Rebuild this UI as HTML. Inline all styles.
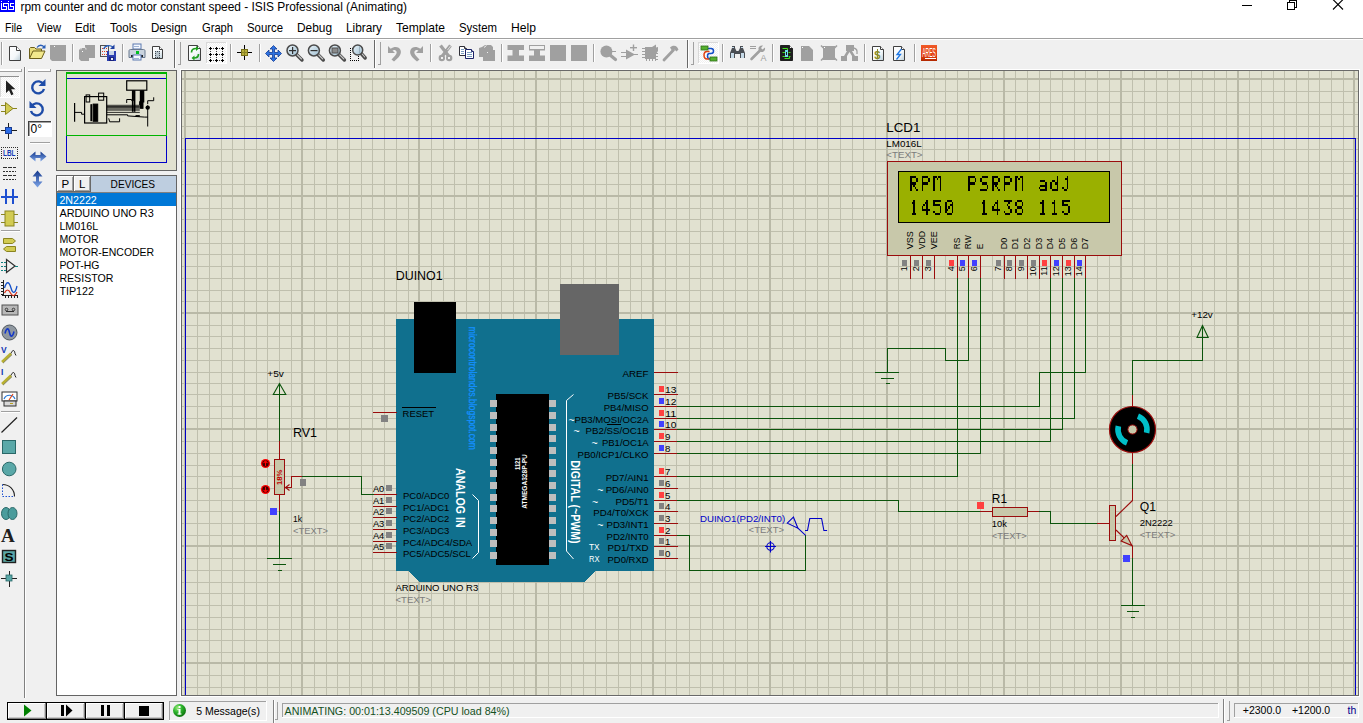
<!DOCTYPE html>
<html><head><meta charset="utf-8"><title>rpm counter and dc motor constant speed - ISIS Professional (Animating)</title>
<style>html,body{margin:0;padding:0;background:#F0F0F0;overflow:hidden}svg{display:block}text{font-family:"Liberation Sans",sans-serif;white-space:pre}</style></head><body>
<svg width="1363" height="723" viewBox="0 0 1363 723">
<rect x="0" y="0" width="1363" height="723" fill="#F0F0F0" />
<rect x="0" y="0" width="1363" height="38" fill="#FFFFFF" />
<rect x="0" y="38" width="1363" height="1" fill="#A0A0A0" />
<rect x="0" y="39" width="1363" height="1" fill="#FFFFFF" />
<rect x="0" y="0" width="15" height="12" fill="#0000FF" />
<rect x="1" y="1" width="1" height="1" fill="#FFFFFF" />
<rect x="8" y="1" width="1" height="1" fill="#FFFFFF" />
<rect x="1" y="3" width="1" height="1" fill="#FFFFFF" />
<rect x="3" y="3" width="1" height="1" fill="#FFFFFF" />
<rect x="4" y="3" width="1" height="1" fill="#FFFFFF" />
<rect x="5" y="3" width="1" height="1" fill="#FFFFFF" />
<rect x="6" y="3" width="1" height="1" fill="#FFFFFF" />
<rect x="7" y="3" width="1" height="1" fill="#FFFFFF" />
<rect x="8" y="3" width="1" height="1" fill="#FFFFFF" />
<rect x="10" y="3" width="1" height="1" fill="#FFFFFF" />
<rect x="11" y="3" width="1" height="1" fill="#FFFFFF" />
<rect x="12" y="3" width="1" height="1" fill="#FFFFFF" />
<rect x="13" y="3" width="1" height="1" fill="#FFFFFF" />
<rect x="1" y="4" width="1" height="1" fill="#FFFFFF" />
<rect x="3" y="4" width="1" height="1" fill="#FFFFFF" />
<rect x="8" y="4" width="1" height="1" fill="#FFFFFF" />
<rect x="10" y="4" width="1" height="1" fill="#FFFFFF" />
<rect x="1" y="5" width="1" height="1" fill="#FFFFFF" />
<rect x="3" y="5" width="1" height="1" fill="#FFFFFF" />
<rect x="8" y="5" width="1" height="1" fill="#FFFFFF" />
<rect x="10" y="5" width="1" height="1" fill="#FFFFFF" />
<rect x="1" y="6" width="1" height="1" fill="#FFFFFF" />
<rect x="3" y="6" width="1" height="1" fill="#FFFFFF" />
<rect x="4" y="6" width="1" height="1" fill="#FFFFFF" />
<rect x="5" y="6" width="1" height="1" fill="#FFFFFF" />
<rect x="6" y="6" width="1" height="1" fill="#FFFFFF" />
<rect x="8" y="6" width="1" height="1" fill="#FFFFFF" />
<rect x="10" y="6" width="1" height="1" fill="#FFFFFF" />
<rect x="11" y="6" width="1" height="1" fill="#FFFFFF" />
<rect x="12" y="6" width="1" height="1" fill="#FFFFFF" />
<rect x="13" y="6" width="1" height="1" fill="#FFFFFF" />
<rect x="1" y="7" width="1" height="1" fill="#FFFFFF" />
<rect x="6" y="7" width="1" height="1" fill="#FFFFFF" />
<rect x="8" y="7" width="1" height="1" fill="#FFFFFF" />
<rect x="13" y="7" width="1" height="1" fill="#FFFFFF" />
<rect x="1" y="8" width="1" height="1" fill="#FFFFFF" />
<rect x="6" y="8" width="1" height="1" fill="#FFFFFF" />
<rect x="8" y="8" width="1" height="1" fill="#FFFFFF" />
<rect x="13" y="8" width="1" height="1" fill="#FFFFFF" />
<rect x="1" y="9" width="1" height="1" fill="#FFFFFF" />
<rect x="2" y="9" width="1" height="1" fill="#FFFFFF" />
<rect x="3" y="9" width="1" height="1" fill="#FFFFFF" />
<rect x="4" y="9" width="1" height="1" fill="#FFFFFF" />
<rect x="5" y="9" width="1" height="1" fill="#FFFFFF" />
<rect x="6" y="9" width="1" height="1" fill="#FFFFFF" />
<rect x="8" y="9" width="1" height="1" fill="#FFFFFF" />
<rect x="9" y="9" width="1" height="1" fill="#FFFFFF" />
<rect x="10" y="9" width="1" height="1" fill="#FFFFFF" />
<rect x="11" y="9" width="1" height="1" fill="#FFFFFF" />
<rect x="12" y="9" width="1" height="1" fill="#FFFFFF" />
<rect x="13" y="9" width="1" height="1" fill="#FFFFFF" />
<text x="20.5" y="11" font-size="12" fill="#000" textLength="386.5" lengthAdjust="spacingAndGlyphs" >rpm counter and dc motor constant speed - ISIS Professional (Animating)</text>
<rect x="1242" y="5" width="10" height="1" fill="#000" />
<g fill="none" stroke="#000" stroke-width="1" shape-rendering="crispEdges"><rect x="1287.5" y="2.5" width="7" height="7"/><path d="M1289.5 2.5v-2h7v7h-2"/></g>
<path d="M1333 -0.5l10 10M1343 -0.5l-10 10" stroke="#000" stroke-width="1.1" fill="none"/>
<text x="5" y="31.5" font-size="12.2" fill="#000" textLength="17" lengthAdjust="spacingAndGlyphs" >File</text>
<text x="37" y="31.5" font-size="12.2" fill="#000" textLength="24" lengthAdjust="spacingAndGlyphs" >View</text>
<text x="75" y="31.5" font-size="12.2" fill="#000" textLength="20" lengthAdjust="spacingAndGlyphs" >Edit</text>
<text x="110" y="31.5" font-size="12.2" fill="#000" textLength="27" lengthAdjust="spacingAndGlyphs" >Tools</text>
<text x="151" y="31.5" font-size="12.2" fill="#000" textLength="36" lengthAdjust="spacingAndGlyphs" >Design</text>
<text x="202" y="31.5" font-size="12.2" fill="#000" textLength="31" lengthAdjust="spacingAndGlyphs" >Graph</text>
<text x="247" y="31.5" font-size="12.2" fill="#000" textLength="36" lengthAdjust="spacingAndGlyphs" >Source</text>
<text x="297" y="31.5" font-size="12.2" fill="#000" textLength="35" lengthAdjust="spacingAndGlyphs" >Debug</text>
<text x="346" y="31.5" font-size="12.2" fill="#000" textLength="36" lengthAdjust="spacingAndGlyphs" >Library</text>
<text x="396" y="31.5" font-size="12.2" fill="#000" textLength="49" lengthAdjust="spacingAndGlyphs" >Template</text>
<text x="459" y="31.5" font-size="12.2" fill="#000" textLength="38" lengthAdjust="spacingAndGlyphs" >System</text>
<text x="511" y="31.5" font-size="12.2" fill="#000" textLength="25" lengthAdjust="spacingAndGlyphs" >Help</text>
<rect x="1" y="42" width="1" height="23" fill="#A0A0A0" />
<rect x="2" y="42" width="1" height="23" fill="#FFFFFF" />
<rect x="72" y="44" width="1" height="18" fill="#A0A0A0" />
<rect x="73" y="44" width="1" height="18" fill="#FFFFFF" />
<rect x="122" y="44" width="1" height="18" fill="#A0A0A0" />
<rect x="123" y="44" width="1" height="18" fill="#FFFFFF" />
<rect x="230" y="44" width="1" height="18" fill="#A0A0A0" />
<rect x="231" y="44" width="1" height="18" fill="#FFFFFF" />
<rect x="259" y="44" width="1" height="18" fill="#A0A0A0" />
<rect x="260" y="44" width="1" height="18" fill="#FFFFFF" />
<rect x="430" y="44" width="1" height="18" fill="#A0A0A0" />
<rect x="431" y="44" width="1" height="18" fill="#FFFFFF" />
<rect x="501" y="44" width="1" height="18" fill="#A0A0A0" />
<rect x="502" y="44" width="1" height="18" fill="#FFFFFF" />
<rect x="593" y="44" width="1" height="18" fill="#A0A0A0" />
<rect x="594" y="44" width="1" height="18" fill="#FFFFFF" />
<rect x="722" y="44" width="1" height="18" fill="#A0A0A0" />
<rect x="723" y="44" width="1" height="18" fill="#FFFFFF" />
<rect x="772" y="44" width="1" height="18" fill="#A0A0A0" />
<rect x="773" y="44" width="1" height="18" fill="#FFFFFF" />
<rect x="864" y="44" width="1" height="18" fill="#A0A0A0" />
<rect x="865" y="44" width="1" height="18" fill="#FFFFFF" />
<rect x="914" y="44" width="1" height="18" fill="#A0A0A0" />
<rect x="915" y="44" width="1" height="18" fill="#FFFFFF" />
<rect x="174" y="40" width="1" height="28" fill="#696969" />
<rect x="175" y="40" width="1" height="28" fill="#FFFFFF" />
<rect x="180" y="42" width="1" height="23" fill="#A0A0A0" />
<rect x="178" y="64" width="3" height="1" fill="#A0A0A0" />
<rect x="374" y="40" width="1" height="28" fill="#696969" />
<rect x="375" y="40" width="1" height="28" fill="#FFFFFF" />
<rect x="380" y="42" width="1" height="23" fill="#A0A0A0" />
<rect x="378" y="64" width="3" height="1" fill="#A0A0A0" />
<rect x="687" y="40" width="1" height="28" fill="#696969" />
<rect x="688" y="40" width="1" height="28" fill="#FFFFFF" />
<rect x="693" y="42" width="1" height="23" fill="#A0A0A0" />
<rect x="691" y="64" width="3" height="1" fill="#A0A0A0" />
<rect x="0" y="69" width="21" height="2" fill="#FFFFFF" />
<rect x="0" y="71" width="22" height="1" fill="#A0A0A0" />
<rect x="21" y="69" width="1" height="3" fill="#A0A0A0" />
<rect x="28" y="69" width="22" height="2" fill="#FFFFFF" />
<rect x="28" y="71" width="23" height="1" fill="#A0A0A0" />
<rect x="50" y="69" width="1" height="3" fill="#A0A0A0" />
<rect x="24" y="67" width="1" height="631" fill="#808080" />
<rect x="25" y="67" width="1" height="631" fill="#FFFFFF" />
<rect x="1" y="230" width="19" height="1" fill="#A0A0A0" />
<rect x="1" y="231" width="19" height="1" fill="#FFFFFF" />
<rect x="1" y="411" width="19" height="1" fill="#A0A0A0" />
<rect x="1" y="412" width="19" height="1" fill="#FFFFFF" />
<rect x="30" y="142" width="20" height="1" fill="#A0A0A0" />
<rect x="30" y="143" width="20" height="1" fill="#FFFFFF" />
<rect x="28" y="121" width="24" height="16" fill="#FFFFFF" />
<rect x="28" y="121" width="23" height="1" fill="#404040" />
<rect x="28" y="121" width="1" height="15" fill="#404040" />
<rect x="29" y="122" width="22" height="1" fill="#A0A0A0" />
<rect x="29" y="122" width="1" height="14" fill="#A0A0A0" />
<text x="30.5" y="132.7" font-size="12" fill="#000" >0°</text>
<rect x="56" y="70" width="121" height="101" fill="#646464" />
<rect x="57" y="71" width="119" height="99" fill="#E1E1D0" />
<rect x="56" y="175" width="121" height="521" fill="#646464" />
<rect x="57" y="176" width="119" height="519" fill="#FFFFFF" />
<rect x="57" y="176" width="119" height="16" fill="#BECEE0" />
<rect x="57" y="192" width="119" height="1" fill="#808080" />
<rect x="57" y="176" width="17" height="16" fill="#F0F0F0" />
<rect x="57" y="176" width="17" height="1" fill="#FFFFFF" />
<rect x="57" y="176" width="1" height="16" fill="#FFFFFF" />
<rect x="73" y="176" width="1" height="16" fill="#696969" />
<rect x="57" y="191" width="17" height="1" fill="#696969" />
<rect x="72" y="177" width="1" height="14" fill="#A0A0A0" />
<rect x="58" y="190" width="15" height="1" fill="#A0A0A0" />
<rect x="74" y="176" width="17" height="16" fill="#F0F0F0" />
<rect x="74" y="176" width="17" height="1" fill="#FFFFFF" />
<rect x="74" y="176" width="1" height="16" fill="#FFFFFF" />
<rect x="90" y="176" width="1" height="16" fill="#696969" />
<rect x="74" y="191" width="17" height="1" fill="#696969" />
<rect x="89" y="177" width="1" height="14" fill="#A0A0A0" />
<rect x="75" y="190" width="15" height="1" fill="#A0A0A0" />
<text x="61.5" y="187.6" font-size="11.5" fill="#000" >P</text>
<text x="79" y="187.6" font-size="11.5" fill="#000" >L</text>
<text x="110.6" y="187.6" font-size="11.5" fill="#000" textLength="44.5" lengthAdjust="spacingAndGlyphs" >DEVICES</text>
<rect x="57" y="193" width="119" height="13" fill="#0078D7" />
<text x="59.4" y="203.6" font-size="11.3" fill="#FFF" textLength="37.4" lengthAdjust="spacingAndGlyphs" >2N2222</text>
<text x="59.4" y="216.6" font-size="11.3" fill="#000" textLength="94.3" lengthAdjust="spacingAndGlyphs" >ARDUINO UNO R3</text>
<text x="59.4" y="229.6" font-size="11.3" fill="#000" textLength="38.8" lengthAdjust="spacingAndGlyphs" >LM016L</text>
<text x="59.4" y="242.6" font-size="11.3" fill="#000" textLength="39.2" lengthAdjust="spacingAndGlyphs" >MOTOR</text>
<text x="59.4" y="255.6" font-size="11.3" fill="#000" textLength="94.8" lengthAdjust="spacingAndGlyphs" >MOTOR-ENCODER</text>
<text x="59.4" y="268.6" font-size="11.3" fill="#000" textLength="40" lengthAdjust="spacingAndGlyphs" >POT-HG</text>
<text x="59.4" y="281.6" font-size="11.3" fill="#000" textLength="54" lengthAdjust="spacingAndGlyphs" >RESISTOR</text>
<text x="59.4" y="294.6" font-size="11.3" fill="#000" textLength="34.6" lengthAdjust="spacingAndGlyphs" >TIP122</text>
<rect x="7" y="702" width="157" height="18" fill="#000" />
<rect x="8" y="703" width="38" height="16" fill="#F0F0F0" />
<rect x="8" y="703" width="38" height="1" fill="#FFFFFF" />
<rect x="8" y="703" width="1" height="16" fill="#FFFFFF" />
<rect x="45" y="703" width="1" height="16" fill="#808080" />
<rect x="8" y="718" width="38" height="1" fill="#808080" />
<rect x="44" y="704" width="1" height="14" fill="#C8C8C8" />
<rect x="9" y="717" width="36" height="1" fill="#C8C8C8" />
<rect x="47" y="703" width="38" height="16" fill="#F0F0F0" />
<rect x="47" y="703" width="38" height="1" fill="#FFFFFF" />
<rect x="47" y="703" width="1" height="16" fill="#FFFFFF" />
<rect x="84" y="703" width="1" height="16" fill="#808080" />
<rect x="47" y="718" width="38" height="1" fill="#808080" />
<rect x="83" y="704" width="1" height="14" fill="#C8C8C8" />
<rect x="48" y="717" width="36" height="1" fill="#C8C8C8" />
<rect x="86" y="703" width="38" height="16" fill="#F0F0F0" />
<rect x="86" y="703" width="38" height="1" fill="#FFFFFF" />
<rect x="86" y="703" width="1" height="16" fill="#FFFFFF" />
<rect x="123" y="703" width="1" height="16" fill="#808080" />
<rect x="86" y="718" width="38" height="1" fill="#808080" />
<rect x="122" y="704" width="1" height="14" fill="#C8C8C8" />
<rect x="87" y="717" width="36" height="1" fill="#C8C8C8" />
<rect x="125" y="703" width="38" height="16" fill="#F0F0F0" />
<rect x="125" y="703" width="38" height="1" fill="#FFFFFF" />
<rect x="125" y="703" width="1" height="16" fill="#FFFFFF" />
<rect x="162" y="703" width="1" height="16" fill="#808080" />
<rect x="125" y="718" width="38" height="1" fill="#808080" />
<rect x="161" y="704" width="1" height="14" fill="#C8C8C8" />
<rect x="126" y="717" width="36" height="1" fill="#C8C8C8" />
<path d="M24 704.5v12l7.5-6z" fill="#008000"/>
<rect x="61" y="705" width="3" height="11" fill="#000" />
<path d="M66 704.5v12l6.5-6z" fill="#000"/>
<rect x="101" y="705" width="3" height="11" fill="#000" />
<rect x="107" y="705" width="3" height="11" fill="#000" />
<rect x="139" y="706" width="10" height="10" fill="#000" />
<rect x="169" y="701" width="98" height="20" fill="#FFFFFF" />
<rect x="169" y="701" width="97" height="19" fill="#A0A0A0" />
<rect x="170" y="702" width="96" height="18" fill="#F0F0F0" />
<defs><radialGradient id="gi" cx="35%" cy="30%" r="75%"><stop offset="0" stop-color="#9CEB7C"/><stop offset="0.45" stop-color="#2DB52D"/><stop offset="1" stop-color="#0A6E0A"/></radialGradient></defs>
<circle cx="179.5" cy="710.5" r="6.5" fill="url(#gi)"/>
<rect x="178.5" y="706" width="2" height="2" fill="#FFF" />
<rect x="178.5" y="709" width="2" height="5.5" fill="#FFF" />
<rect x="177.5" y="709" width="1" height="1" fill="#FFF" />
<rect x="177.5" y="713.5" width="4" height="1" fill="#FFF" />
<text x="196.2" y="714.7" font-size="11.5" fill="#000" textLength="63.7" lengthAdjust="spacingAndGlyphs" >5 Message(s)</text>
<rect x="273" y="700" width="1" height="23" fill="#808080" />
<rect x="274" y="700" width="1" height="23" fill="#FFFFFF" />
<rect x="277" y="702" width="1" height="18" fill="#A0A0A0" />
<rect x="275" y="719" width="3" height="1" fill="#A0A0A0" />
<rect x="282" y="703" width="937" height="15" fill="#FFFFFF" />
<rect x="282" y="703" width="936" height="14" fill="#A0A0A0" />
<rect x="283" y="704" width="935" height="13" fill="#F0F0F0" />
<text x="284.6" y="715" font-size="11.7" fill="#14501E" textLength="225" lengthAdjust="spacingAndGlyphs" >ANIMATING: 00:01:13.409509 (CPU load 84%)</text>
<rect x="1223" y="699" width="1" height="24" fill="#808080" />
<rect x="1224" y="699" width="1" height="24" fill="#FFFFFF" />
<rect x="1229" y="701" width="1" height="20" fill="#A0A0A0" />
<rect x="1227" y="720" width="3" height="1" fill="#A0A0A0" />
<rect x="1234" y="703" width="125" height="15" fill="#FFFFFF" />
<rect x="1234" y="703" width="124" height="14" fill="#A0A0A0" />
<rect x="1235" y="704" width="123" height="13" fill="#F0F0F0" />
<text x="1242.8" y="714.3" font-size="11.5" fill="#000" textLength="38.2" lengthAdjust="spacingAndGlyphs" >+2300.0</text>
<text x="1292" y="714.3" font-size="11.5" fill="#000" textLength="38.2" lengthAdjust="spacingAndGlyphs" >+1200.0</text>
<text x="1347.5" y="714.3" font-size="11.5" fill="#00008B" textLength="8.7" lengthAdjust="spacingAndGlyphs" >th</text>
<rect x="180" y="69" width="1180" height="628" fill="#FFFFFF" />
<rect x="181" y="70" width="1178" height="626" fill="#696969" />
<rect x="182" y="71" width="1176" height="624" fill="#E1E1D0" />
<clipPath id="cv"><rect x="182" y="71" width="1176" height="624"/></clipPath>
<g clip-path="url(#cv)">
<g shape-rendering="crispEdges">
<rect x="197" y="71" width="1" height="624" fill="#BFBFAD" />
<rect x="209" y="71" width="1" height="624" fill="#BFBFAD" />
<rect x="221" y="71" width="1" height="624" fill="#BFBFAD" />
<rect x="232" y="71" width="1" height="624" fill="#BFBFAD" />
<rect x="244" y="71" width="1" height="624" fill="#BFBFAD" />
<rect x="256" y="71" width="1" height="624" fill="#BFBFAD" />
<rect x="267" y="71" width="1" height="624" fill="#BFBFAD" />
<rect x="279" y="71" width="1" height="624" fill="#BFBFAD" />
<rect x="291" y="71" width="1" height="624" fill="#BFBFAD" />
<rect x="314" y="71" width="1" height="624" fill="#BFBFAD" />
<rect x="326" y="71" width="1" height="624" fill="#BFBFAD" />
<rect x="337" y="71" width="1" height="624" fill="#BFBFAD" />
<rect x="349" y="71" width="1" height="624" fill="#BFBFAD" />
<rect x="361" y="71" width="1" height="624" fill="#BFBFAD" />
<rect x="372" y="71" width="1" height="624" fill="#BFBFAD" />
<rect x="384" y="71" width="1" height="624" fill="#BFBFAD" />
<rect x="396" y="71" width="1" height="624" fill="#BFBFAD" />
<rect x="408" y="71" width="1" height="624" fill="#BFBFAD" />
<rect x="431" y="71" width="1" height="624" fill="#BFBFAD" />
<rect x="443" y="71" width="1" height="624" fill="#BFBFAD" />
<rect x="454" y="71" width="1" height="624" fill="#BFBFAD" />
<rect x="466" y="71" width="1" height="624" fill="#BFBFAD" />
<rect x="478" y="71" width="1" height="624" fill="#BFBFAD" />
<rect x="489" y="71" width="1" height="624" fill="#BFBFAD" />
<rect x="501" y="71" width="1" height="624" fill="#BFBFAD" />
<rect x="513" y="71" width="1" height="624" fill="#BFBFAD" />
<rect x="524" y="71" width="1" height="624" fill="#BFBFAD" />
<rect x="548" y="71" width="1" height="624" fill="#BFBFAD" />
<rect x="560" y="71" width="1" height="624" fill="#BFBFAD" />
<rect x="571" y="71" width="1" height="624" fill="#BFBFAD" />
<rect x="583" y="71" width="1" height="624" fill="#BFBFAD" />
<rect x="595" y="71" width="1" height="624" fill="#BFBFAD" />
<rect x="606" y="71" width="1" height="624" fill="#BFBFAD" />
<rect x="618" y="71" width="1" height="624" fill="#BFBFAD" />
<rect x="630" y="71" width="1" height="624" fill="#BFBFAD" />
<rect x="641" y="71" width="1" height="624" fill="#BFBFAD" />
<rect x="665" y="71" width="1" height="624" fill="#BFBFAD" />
<rect x="676" y="71" width="1" height="624" fill="#BFBFAD" />
<rect x="689" y="71" width="1" height="624" fill="#BFBFAD" />
<rect x="700" y="71" width="1" height="624" fill="#BFBFAD" />
<rect x="712" y="71" width="1" height="624" fill="#BFBFAD" />
<rect x="723" y="71" width="1" height="624" fill="#BFBFAD" />
<rect x="735" y="71" width="1" height="624" fill="#BFBFAD" />
<rect x="747" y="71" width="1" height="624" fill="#BFBFAD" />
<rect x="758" y="71" width="1" height="624" fill="#BFBFAD" />
<rect x="782" y="71" width="1" height="624" fill="#BFBFAD" />
<rect x="793" y="71" width="1" height="624" fill="#BFBFAD" />
<rect x="805" y="71" width="1" height="624" fill="#BFBFAD" />
<rect x="817" y="71" width="1" height="624" fill="#BFBFAD" />
<rect x="828" y="71" width="1" height="624" fill="#BFBFAD" />
<rect x="840" y="71" width="1" height="624" fill="#BFBFAD" />
<rect x="852" y="71" width="1" height="624" fill="#BFBFAD" />
<rect x="863" y="71" width="1" height="624" fill="#BFBFAD" />
<rect x="875" y="71" width="1" height="624" fill="#BFBFAD" />
<rect x="898" y="71" width="1" height="624" fill="#BFBFAD" />
<rect x="910" y="71" width="1" height="624" fill="#BFBFAD" />
<rect x="922" y="71" width="1" height="624" fill="#BFBFAD" />
<rect x="934" y="71" width="1" height="624" fill="#BFBFAD" />
<rect x="945" y="71" width="1" height="624" fill="#BFBFAD" />
<rect x="957" y="71" width="1" height="624" fill="#BFBFAD" />
<rect x="968" y="71" width="1" height="624" fill="#BFBFAD" />
<rect x="980" y="71" width="1" height="624" fill="#BFBFAD" />
<rect x="992" y="71" width="1" height="624" fill="#BFBFAD" />
<rect x="1015" y="71" width="1" height="624" fill="#BFBFAD" />
<rect x="1027" y="71" width="1" height="624" fill="#BFBFAD" />
<rect x="1039" y="71" width="1" height="624" fill="#BFBFAD" />
<rect x="1050" y="71" width="1" height="624" fill="#BFBFAD" />
<rect x="1062" y="71" width="1" height="624" fill="#BFBFAD" />
<rect x="1074" y="71" width="1" height="624" fill="#BFBFAD" />
<rect x="1085" y="71" width="1" height="624" fill="#BFBFAD" />
<rect x="1097" y="71" width="1" height="624" fill="#BFBFAD" />
<rect x="1109" y="71" width="1" height="624" fill="#BFBFAD" />
<rect x="1132" y="71" width="1" height="624" fill="#BFBFAD" />
<rect x="1144" y="71" width="1" height="624" fill="#BFBFAD" />
<rect x="1156" y="71" width="1" height="624" fill="#BFBFAD" />
<rect x="1167" y="71" width="1" height="624" fill="#BFBFAD" />
<rect x="1179" y="71" width="1" height="624" fill="#BFBFAD" />
<rect x="1191" y="71" width="1" height="624" fill="#BFBFAD" />
<rect x="1202" y="71" width="1" height="624" fill="#BFBFAD" />
<rect x="1214" y="71" width="1" height="624" fill="#BFBFAD" />
<rect x="1226" y="71" width="1" height="624" fill="#BFBFAD" />
<rect x="1249" y="71" width="1" height="624" fill="#BFBFAD" />
<rect x="1261" y="71" width="1" height="624" fill="#BFBFAD" />
<rect x="1273" y="71" width="1" height="624" fill="#BFBFAD" />
<rect x="1284" y="71" width="1" height="624" fill="#BFBFAD" />
<rect x="1296" y="71" width="1" height="624" fill="#BFBFAD" />
<rect x="1308" y="71" width="1" height="624" fill="#BFBFAD" />
<rect x="1319" y="71" width="1" height="624" fill="#BFBFAD" />
<rect x="1331" y="71" width="1" height="624" fill="#BFBFAD" />
<rect x="1343" y="71" width="1" height="624" fill="#BFBFAD" />
<rect x="182" y="91" width="1176" height="1" fill="#BFBFAD" />
<rect x="182" y="102" width="1176" height="1" fill="#BFBFAD" />
<rect x="182" y="114" width="1176" height="1" fill="#BFBFAD" />
<rect x="182" y="126" width="1176" height="1" fill="#BFBFAD" />
<rect x="182" y="138" width="1176" height="1" fill="#BFBFAD" />
<rect x="182" y="149" width="1176" height="1" fill="#BFBFAD" />
<rect x="182" y="161" width="1176" height="1" fill="#BFBFAD" />
<rect x="182" y="173" width="1176" height="1" fill="#BFBFAD" />
<rect x="182" y="184" width="1176" height="1" fill="#BFBFAD" />
<rect x="182" y="208" width="1176" height="1" fill="#BFBFAD" />
<rect x="182" y="219" width="1176" height="1" fill="#BFBFAD" />
<rect x="182" y="231" width="1176" height="1" fill="#BFBFAD" />
<rect x="182" y="243" width="1176" height="1" fill="#BFBFAD" />
<rect x="182" y="254" width="1176" height="1" fill="#BFBFAD" />
<rect x="182" y="266" width="1176" height="1" fill="#BFBFAD" />
<rect x="182" y="278" width="1176" height="1" fill="#BFBFAD" />
<rect x="182" y="290" width="1176" height="1" fill="#BFBFAD" />
<rect x="182" y="301" width="1176" height="1" fill="#BFBFAD" />
<rect x="182" y="325" width="1176" height="1" fill="#BFBFAD" />
<rect x="182" y="336" width="1176" height="1" fill="#BFBFAD" />
<rect x="182" y="348" width="1176" height="1" fill="#BFBFAD" />
<rect x="182" y="360" width="1176" height="1" fill="#BFBFAD" />
<rect x="182" y="372" width="1176" height="1" fill="#BFBFAD" />
<rect x="182" y="383" width="1176" height="1" fill="#BFBFAD" />
<rect x="182" y="394" width="1176" height="1" fill="#BFBFAD" />
<rect x="182" y="406" width="1176" height="1" fill="#BFBFAD" />
<rect x="182" y="418" width="1176" height="1" fill="#BFBFAD" />
<rect x="182" y="441" width="1176" height="1" fill="#BFBFAD" />
<rect x="182" y="453" width="1176" height="1" fill="#BFBFAD" />
<rect x="182" y="465" width="1176" height="1" fill="#BFBFAD" />
<rect x="182" y="476" width="1176" height="1" fill="#BFBFAD" />
<rect x="182" y="488" width="1176" height="1" fill="#BFBFAD" />
<rect x="182" y="500" width="1176" height="1" fill="#BFBFAD" />
<rect x="182" y="511" width="1176" height="1" fill="#BFBFAD" />
<rect x="182" y="523" width="1176" height="1" fill="#BFBFAD" />
<rect x="182" y="535" width="1176" height="1" fill="#BFBFAD" />
<rect x="182" y="558" width="1176" height="1" fill="#BFBFAD" />
<rect x="182" y="570" width="1176" height="1" fill="#BFBFAD" />
<rect x="182" y="582" width="1176" height="1" fill="#BFBFAD" />
<rect x="182" y="593" width="1176" height="1" fill="#BFBFAD" />
<rect x="182" y="605" width="1176" height="1" fill="#BFBFAD" />
<rect x="182" y="617" width="1176" height="1" fill="#BFBFAD" />
<rect x="182" y="629" width="1176" height="1" fill="#BFBFAD" />
<rect x="182" y="640" width="1176" height="1" fill="#BFBFAD" />
<rect x="182" y="652" width="1176" height="1" fill="#BFBFAD" />
<rect x="182" y="675" width="1176" height="1" fill="#BFBFAD" />
<rect x="182" y="687" width="1176" height="1" fill="#BFBFAD" />
<rect x="184" y="71" width="2" height="624" fill="#B9B9A7" />
<rect x="301" y="71" width="2" height="624" fill="#B9B9A7" />
<rect x="418" y="71" width="2" height="624" fill="#B9B9A7" />
<rect x="535" y="71" width="2" height="624" fill="#B9B9A7" />
<rect x="652" y="71" width="2" height="624" fill="#B9B9A7" />
<rect x="769" y="71" width="2" height="624" fill="#B9B9A7" />
<rect x="886" y="71" width="2" height="624" fill="#B9B9A7" />
<rect x="1003" y="71" width="2" height="624" fill="#B9B9A7" />
<rect x="1120" y="71" width="2" height="624" fill="#B9B9A7" />
<rect x="1237" y="71" width="2" height="624" fill="#B9B9A7" />
<rect x="1353" y="71" width="2" height="624" fill="#B9B9A7" />
<rect x="182" y="78" width="1176" height="2" fill="#B9B9A7" />
<rect x="182" y="195" width="1176" height="2" fill="#B9B9A7" />
<rect x="182" y="312" width="1176" height="2" fill="#B9B9A7" />
<rect x="182" y="428" width="1176" height="2" fill="#B9B9A7" />
<rect x="182" y="545" width="1176" height="2" fill="#B9B9A7" />
<rect x="182" y="662" width="1176" height="2" fill="#B9B9A7" />
<rect x="185" y="138" width="1171" height="1" fill="#0000C8" />
<rect x="185" y="138" width="1" height="600" fill="#0000C8" />
<rect x="1355" y="138" width="1" height="600" fill="#0000C8" />
<rect x="887" y="161" width="235" height="95" fill="#9A0C0C" />
<rect x="888" y="162" width="233" height="93" fill="#C8C8AA" />
<rect x="898" y="171" width="212" height="52" fill="#000" />
<rect x="899" y="172" width="210" height="50" fill="#9AB000" />
<rect x="910" y="256" width="1" height="23" fill="#9A0C0C" />
<rect x="902" y="260" width="5" height="6" fill="#828282" />
<text x="913.1" y="249.3" font-size="9.3" fill="#000" textLength="18" lengthAdjust="spacingAndGlyphs" transform="rotate(-90 913.1 249.3)" >VSS</text>
<text x="907.2" y="266.3" font-size="9" fill="#000" text-anchor="end" transform="rotate(-90 907.2 266.3)" >1</text>
<rect x="922" y="256" width="1" height="23" fill="#9A0C0C" />
<rect x="914" y="260" width="5" height="6" fill="#828282" />
<text x="925.1" y="249.3" font-size="9.3" fill="#000" textLength="18.5" lengthAdjust="spacingAndGlyphs" transform="rotate(-90 925.1 249.3)" >VDD</text>
<text x="919.2" y="266.3" font-size="9" fill="#000" text-anchor="end" transform="rotate(-90 919.2 266.3)" >2</text>
<rect x="934" y="256" width="1" height="23" fill="#9A0C0C" />
<rect x="926" y="260" width="5" height="6" fill="#828282" />
<text x="937.1" y="249.3" font-size="9.3" fill="#000" textLength="18" lengthAdjust="spacingAndGlyphs" transform="rotate(-90 937.1 249.3)" >VEE</text>
<text x="931.2" y="266.3" font-size="9" fill="#000" text-anchor="end" transform="rotate(-90 931.2 266.3)" >3</text>
<rect x="957" y="256" width="1" height="23" fill="#9A0C0C" />
<rect x="949" y="260" width="5" height="6" fill="#FF4040" />
<text x="960.1" y="249.3" font-size="9.3" fill="#000" textLength="11.5" lengthAdjust="spacingAndGlyphs" transform="rotate(-90 960.1 249.3)" >RS</text>
<text x="954.2" y="266.3" font-size="9" fill="#000" text-anchor="end" transform="rotate(-90 954.2 266.3)" >4</text>
<rect x="968" y="256" width="1" height="23" fill="#9A0C0C" />
<rect x="960" y="260" width="5" height="6" fill="#4040FF" />
<text x="971.1" y="249.3" font-size="9.3" fill="#000" textLength="14" lengthAdjust="spacingAndGlyphs" transform="rotate(-90 971.1 249.3)" >RW</text>
<text x="965.2" y="266.3" font-size="9" fill="#000" text-anchor="end" transform="rotate(-90 965.2 266.3)" >5</text>
<rect x="980" y="256" width="1" height="23" fill="#9A0C0C" />
<rect x="972" y="260" width="5" height="6" fill="#4040FF" />
<text x="983.1" y="249.3" font-size="9.3" fill="#000" textLength="5.5" lengthAdjust="spacingAndGlyphs" transform="rotate(-90 983.1 249.3)" >E</text>
<text x="977.2" y="266.3" font-size="9" fill="#000" text-anchor="end" transform="rotate(-90 977.2 266.3)" >6</text>
<rect x="1004" y="256" width="1" height="23" fill="#9A0C0C" />
<rect x="996" y="260" width="5" height="6" fill="#828282" />
<text x="1007.1" y="249.3" font-size="9.3" fill="#000" textLength="11.5" lengthAdjust="spacingAndGlyphs" transform="rotate(-90 1007.1 249.3)" >D0</text>
<text x="1001.2" y="266.3" font-size="9" fill="#000" text-anchor="end" transform="rotate(-90 1001.2 266.3)" >7</text>
<rect x="1015" y="256" width="1" height="23" fill="#9A0C0C" />
<rect x="1007" y="260" width="5" height="6" fill="#828282" />
<text x="1018.1" y="249.3" font-size="9.3" fill="#000" textLength="11.5" lengthAdjust="spacingAndGlyphs" transform="rotate(-90 1018.1 249.3)" >D1</text>
<text x="1012.2" y="266.3" font-size="9" fill="#000" text-anchor="end" transform="rotate(-90 1012.2 266.3)" >8</text>
<rect x="1027" y="256" width="1" height="23" fill="#9A0C0C" />
<rect x="1019" y="260" width="5" height="6" fill="#828282" />
<text x="1030.1" y="249.3" font-size="9.3" fill="#000" textLength="11.5" lengthAdjust="spacingAndGlyphs" transform="rotate(-90 1030.1 249.3)" >D2</text>
<text x="1024.2" y="266.3" font-size="9" fill="#000" text-anchor="end" transform="rotate(-90 1024.2 266.3)" >9</text>
<rect x="1039" y="256" width="1" height="23" fill="#9A0C0C" />
<rect x="1031" y="260" width="5" height="6" fill="#828282" />
<text x="1042.1" y="249.3" font-size="9.3" fill="#000" textLength="11.5" lengthAdjust="spacingAndGlyphs" transform="rotate(-90 1042.1 249.3)" >D3</text>
<text x="1036.2" y="266.3" font-size="9" fill="#000" text-anchor="end" transform="rotate(-90 1036.2 266.3)" >10</text>
<rect x="1050" y="256" width="1" height="23" fill="#9A0C0C" />
<rect x="1042" y="260" width="5" height="6" fill="#FF4040" />
<text x="1053.1" y="249.3" font-size="9.3" fill="#000" textLength="11.5" lengthAdjust="spacingAndGlyphs" transform="rotate(-90 1053.1 249.3)" >D4</text>
<text x="1047.2" y="266.3" font-size="9" fill="#000" text-anchor="end" transform="rotate(-90 1047.2 266.3)" >11</text>
<rect x="1062" y="256" width="1" height="23" fill="#9A0C0C" />
<rect x="1054" y="260" width="5" height="6" fill="#4040FF" />
<text x="1065.1" y="249.3" font-size="9.3" fill="#000" textLength="11.5" lengthAdjust="spacingAndGlyphs" transform="rotate(-90 1065.1 249.3)" >D5</text>
<text x="1059.2" y="266.3" font-size="9" fill="#000" text-anchor="end" transform="rotate(-90 1059.2 266.3)" >12</text>
<rect x="1074" y="256" width="1" height="23" fill="#9A0C0C" />
<rect x="1066" y="260" width="5" height="6" fill="#FF4040" />
<text x="1077.1" y="249.3" font-size="9.3" fill="#000" textLength="11.5" lengthAdjust="spacingAndGlyphs" transform="rotate(-90 1077.1 249.3)" >D6</text>
<text x="1071.2" y="266.3" font-size="9" fill="#000" text-anchor="end" transform="rotate(-90 1071.2 266.3)" >13</text>
<rect x="1085" y="256" width="1" height="23" fill="#9A0C0C" />
<rect x="1077" y="260" width="5" height="6" fill="#4040FF" />
<text x="1088.1" y="249.3" font-size="9.3" fill="#000" textLength="11.5" lengthAdjust="spacingAndGlyphs" transform="rotate(-90 1088.1 249.3)" >D7</text>
<text x="1082.2" y="266.3" font-size="9" fill="#000" text-anchor="end" transform="rotate(-90 1082.2 266.3)" >14</text>
<text x="886.3" y="132" font-size="13" fill="#000" textLength="34" lengthAdjust="spacingAndGlyphs" >LCD1</text>
<text x="886.3" y="146.8" font-size="9" fill="#000" textLength="35.4" lengthAdjust="spacingAndGlyphs" >LM016L</text>
<text x="886.3" y="158.3" font-size="9" fill="#7C7C7C" textLength="36.2" lengthAdjust="spacingAndGlyphs" >&lt;TEXT&gt;</text>
<path d="M910 176h2v2h-2zM912 176h1v2h-1zM913 176h2v2h-2zM915 176h1v2h-1zM910 178h2v2h-2zM916 178h2v2h-2zM910 180h2v2h-2zM916 180h2v2h-2zM910 182h2v3h-2zM912 182h1v3h-1zM913 182h2v3h-2zM915 182h1v3h-1zM910 185h2v2h-2zM913 185h2v2h-2zM910 187h2v2h-2zM915 187h1v2h-1zM910 189h2v2h-2zM916 189h2v2h-2zM922 176h1v2h-1zM923 176h2v2h-2zM925 176h1v2h-1zM926 176h2v2h-2zM922 178h1v2h-1zM928 178h2v2h-2zM922 180h1v2h-1zM928 180h2v2h-2zM922 182h1v3h-1zM923 182h2v3h-2zM925 182h1v3h-1zM926 182h2v3h-2zM922 185h1v2h-1zM922 187h1v2h-1zM922 189h1v2h-1zM933 176h2v2h-2zM935 176h2v2h-2zM938 176h2v2h-2zM940 176h1v2h-1zM933 178h2v2h-2zM937 178h1v2h-1zM940 178h1v2h-1zM933 180h2v2h-2zM940 180h1v2h-1zM933 182h2v3h-2zM940 182h1v3h-1zM933 185h2v2h-2zM940 185h1v2h-1zM933 187h2v2h-2zM940 187h1v2h-1zM933 189h2v2h-2zM940 189h1v2h-1zM968 176h2v2h-2zM970 176h2v2h-2zM972 176h1v2h-1zM973 176h2v2h-2zM968 178h2v2h-2zM975 178h1v2h-1zM968 180h2v2h-2zM975 180h1v2h-1zM968 182h2v3h-2zM970 182h2v3h-2zM972 182h1v3h-1zM973 182h2v3h-2zM968 185h2v2h-2zM968 187h2v2h-2zM968 189h2v2h-2zM982 176h1v2h-1zM983 176h2v2h-2zM985 176h2v2h-2zM987 176h1v2h-1zM980 178h2v2h-2zM980 180h2v2h-2zM982 182h1v3h-1zM983 182h2v3h-2zM985 182h2v3h-2zM987 185h1v2h-1zM987 187h1v2h-1zM980 189h2v2h-2zM982 189h1v2h-1zM983 189h2v2h-2zM985 189h2v2h-2zM992 176h2v2h-2zM994 176h1v2h-1zM995 176h2v2h-2zM997 176h1v2h-1zM992 178h2v2h-2zM998 178h2v2h-2zM992 180h2v2h-2zM998 180h2v2h-2zM992 182h2v3h-2zM994 182h1v3h-1zM995 182h2v3h-2zM997 182h1v3h-1zM992 185h2v2h-2zM995 185h2v2h-2zM992 187h2v2h-2zM997 187h1v2h-1zM992 189h2v2h-2zM998 189h2v2h-2zM1004 176h1v2h-1zM1005 176h2v2h-2zM1007 176h1v2h-1zM1008 176h2v2h-2zM1004 178h1v2h-1zM1010 178h2v2h-2zM1004 180h1v2h-1zM1010 180h2v2h-2zM1004 182h1v3h-1zM1005 182h2v3h-2zM1007 182h1v3h-1zM1008 182h2v3h-2zM1004 185h1v2h-1zM1004 187h1v2h-1zM1004 189h1v2h-1zM1015 176h2v2h-2zM1017 176h1v2h-1zM1020 176h2v2h-2zM1022 176h1v2h-1zM1015 178h2v2h-2zM1018 178h2v2h-2zM1022 178h1v2h-1zM1015 180h2v2h-2zM1022 180h1v2h-1zM1015 182h2v3h-2zM1022 182h1v3h-1zM1015 185h2v2h-2zM1022 185h1v2h-1zM1015 187h2v2h-2zM1022 187h1v2h-1zM1015 189h2v2h-2zM1022 189h1v2h-1zM1040 180h2v2h-2zM1042 180h2v2h-2zM1044 180h1v2h-1zM1045 182h2v3h-2zM1040 185h2v2h-2zM1042 185h2v2h-2zM1044 185h1v2h-1zM1045 185h2v2h-2zM1039 187h1v2h-1zM1045 187h2v2h-2zM1040 189h2v2h-2zM1042 189h2v2h-2zM1044 189h1v2h-1zM1045 189h2v2h-2zM1057 176h1v2h-1zM1057 178h1v2h-1zM1052 180h2v2h-2zM1054 180h1v2h-1zM1057 180h1v2h-1zM1050 182h2v3h-2zM1055 182h2v3h-2zM1057 182h1v3h-1zM1050 185h2v2h-2zM1057 185h1v2h-1zM1050 187h2v2h-2zM1057 187h1v2h-1zM1052 189h2v2h-2zM1054 189h1v2h-1zM1055 189h2v2h-2zM1057 189h1v2h-1zM1067 176h1v2h-1zM1065 178h2v2h-2zM1067 178h1v2h-1zM1067 180h1v2h-1zM1067 182h1v3h-1zM1067 185h1v2h-1zM1062 187h2v2h-2zM1067 187h1v2h-1zM1064 189h1v2h-1zM1065 189h2v2h-2z" fill="#000"/>
<path d="M913 200h2v2h-2zM912 202h1v2h-1zM913 202h2v2h-2zM913 204h2v2h-2zM913 206h2v3h-2zM913 209h2v2h-2zM913 211h2v2h-2zM912 213h1v2h-1zM913 213h2v2h-2zM915 213h1v2h-1zM926 200h2v2h-2zM925 202h1v2h-1zM926 202h2v2h-2zM923 204h2v2h-2zM926 204h2v2h-2zM922 206h1v3h-1zM926 206h2v3h-2zM922 209h1v2h-1zM923 209h2v2h-2zM925 209h1v2h-1zM926 209h2v2h-2zM928 209h2v2h-2zM926 211h2v2h-2zM926 213h2v2h-2zM933 200h2v2h-2zM935 200h2v2h-2zM937 200h1v2h-1zM938 200h2v2h-2zM940 200h1v2h-1zM933 202h2v2h-2zM933 204h2v2h-2zM935 204h2v2h-2zM937 204h1v2h-1zM938 204h2v2h-2zM940 206h1v3h-1zM940 209h1v2h-1zM933 211h2v2h-2zM940 211h1v2h-1zM935 213h2v2h-2zM937 213h1v2h-1zM938 213h2v2h-2zM947 200h1v2h-1zM948 200h2v2h-2zM950 200h2v2h-2zM945 202h2v2h-2zM952 202h1v2h-1zM945 204h2v2h-2zM950 204h2v2h-2zM952 204h1v2h-1zM945 206h2v3h-2zM948 206h2v3h-2zM952 206h1v3h-1zM945 209h2v2h-2zM947 209h1v2h-1zM952 209h1v2h-1zM945 211h2v2h-2zM952 211h1v2h-1zM947 213h1v2h-1zM948 213h2v2h-2zM950 213h2v2h-2zM983 200h2v2h-2zM982 202h1v2h-1zM983 202h2v2h-2zM983 204h2v2h-2zM983 206h2v3h-2zM983 209h2v2h-2zM983 211h2v2h-2zM982 213h1v2h-1zM983 213h2v2h-2zM985 213h2v2h-2zM997 200h1v2h-1zM995 202h2v2h-2zM997 202h1v2h-1zM994 204h1v2h-1zM997 204h1v2h-1zM992 206h2v3h-2zM997 206h1v3h-1zM992 209h2v2h-2zM994 209h1v2h-1zM995 209h2v2h-2zM997 209h1v2h-1zM998 209h2v2h-2zM997 211h1v2h-1zM997 213h1v2h-1zM1004 200h1v2h-1zM1005 200h2v2h-2zM1007 200h1v2h-1zM1008 200h2v2h-2zM1010 200h2v2h-2zM1008 202h2v2h-2zM1007 204h1v2h-1zM1008 206h2v3h-2zM1010 209h2v2h-2zM1004 211h1v2h-1zM1010 211h2v2h-2zM1005 213h2v2h-2zM1007 213h1v2h-1zM1008 213h2v2h-2zM1017 200h1v2h-1zM1018 200h2v2h-2zM1020 200h2v2h-2zM1015 202h2v2h-2zM1022 202h1v2h-1zM1015 204h2v2h-2zM1022 204h1v2h-1zM1017 206h1v3h-1zM1018 206h2v3h-2zM1020 206h2v3h-2zM1015 209h2v2h-2zM1022 209h1v2h-1zM1015 211h2v2h-2zM1022 211h1v2h-1zM1017 213h1v2h-1zM1018 213h2v2h-2zM1020 213h2v2h-2zM1042 200h2v2h-2zM1040 202h2v2h-2zM1042 202h2v2h-2zM1042 204h2v2h-2zM1042 206h2v3h-2zM1042 209h2v2h-2zM1042 211h2v2h-2zM1040 213h2v2h-2zM1042 213h2v2h-2zM1044 213h1v2h-1zM1054 200h1v2h-1zM1052 202h2v2h-2zM1054 202h1v2h-1zM1054 204h1v2h-1zM1054 206h1v3h-1zM1054 209h1v2h-1zM1054 211h1v2h-1zM1052 213h2v2h-2zM1054 213h1v2h-1zM1055 213h2v2h-2zM1062 200h2v2h-2zM1064 200h1v2h-1zM1065 200h2v2h-2zM1067 200h1v2h-1zM1068 200h2v2h-2zM1062 202h2v2h-2zM1062 204h2v2h-2zM1064 204h1v2h-1zM1065 204h2v2h-2zM1067 204h1v2h-1zM1068 206h2v3h-2zM1068 209h2v2h-2zM1062 211h2v2h-2zM1068 211h2v2h-2zM1064 213h1v2h-1zM1065 213h2v2h-2zM1067 213h1v2h-1z" fill="#000"/>
<polygon points="396,319 654,319 654,571 595.5,571 584.5,582 419.5,582 408.5,571 396,571" fill="#10708E"/>
<rect x="414" y="302" width="42" height="71" fill="#000" />
<rect x="560" y="284" width="59" height="71" fill="#666666" />
<rect x="496" y="394" width="53" height="171" fill="#000" />
<rect x="490" y="400" width="7" height="7" fill="#BEBEBE" />
<rect x="549" y="400" width="6.5" height="7" fill="#BEBEBE" />
<rect x="490" y="412" width="7" height="7" fill="#BEBEBE" />
<rect x="549" y="412" width="6.5" height="7" fill="#BEBEBE" />
<rect x="490" y="424" width="7" height="7" fill="#BEBEBE" />
<rect x="549" y="424" width="6.5" height="7" fill="#BEBEBE" />
<rect x="490" y="435" width="7" height="7" fill="#BEBEBE" />
<rect x="549" y="435" width="6.5" height="7" fill="#BEBEBE" />
<rect x="490" y="447" width="7" height="7" fill="#BEBEBE" />
<rect x="549" y="447" width="6.5" height="7" fill="#BEBEBE" />
<rect x="490" y="459" width="7" height="7" fill="#BEBEBE" />
<rect x="549" y="459" width="6.5" height="7" fill="#BEBEBE" />
<rect x="490" y="470" width="7" height="7" fill="#BEBEBE" />
<rect x="549" y="470" width="6.5" height="7" fill="#BEBEBE" />
<rect x="490" y="482" width="7" height="7" fill="#BEBEBE" />
<rect x="549" y="482" width="6.5" height="7" fill="#BEBEBE" />
<rect x="490" y="494" width="7" height="7" fill="#BEBEBE" />
<rect x="549" y="494" width="6.5" height="7" fill="#BEBEBE" />
<rect x="490" y="505" width="7" height="7" fill="#BEBEBE" />
<rect x="549" y="505" width="6.5" height="7" fill="#BEBEBE" />
<rect x="490" y="517" width="7" height="7" fill="#BEBEBE" />
<rect x="549" y="517" width="6.5" height="7" fill="#BEBEBE" />
<rect x="490" y="529" width="7" height="7" fill="#BEBEBE" />
<rect x="549" y="529" width="6.5" height="7" fill="#BEBEBE" />
<rect x="490" y="540" width="7" height="7" fill="#BEBEBE" />
<rect x="549" y="540" width="6.5" height="7" fill="#BEBEBE" />
<rect x="490" y="552" width="7" height="7" fill="#BEBEBE" />
<rect x="549" y="552" width="6.5" height="7" fill="#BEBEBE" />
<text x="520.3" y="470" font-size="6.6" fill="#FFF" font-weight="bold" textLength="12.5" lengthAdjust="spacingAndGlyphs" transform="rotate(-90 520.3 470)" >1121</text>
<text x="527.4" y="508.7" font-size="6.6" fill="#FFF" font-weight="bold" textLength="54.5" lengthAdjust="spacingAndGlyphs" transform="rotate(-90 527.4 508.7)" >ATMEGA328P-PU</text>
<text x="468.8" y="326.8" font-size="10" fill="#1490FF" textLength="123" lengthAdjust="spacingAndGlyphs" transform="rotate(90 468.8 326.8)" stroke="#1490FF" stroke-width="0.25">microcontrolandos.blogspot.com</text>
<text x="455.6" y="468" font-size="12.5" fill="#FFF" font-weight="bold" textLength="59.7" lengthAdjust="spacingAndGlyphs" transform="rotate(90 455.6 468)" >ANALOG IN</text>
<text x="571.3" y="460.2" font-size="13" fill="#FFF" font-weight="bold" textLength="83.3" lengthAdjust="spacingAndGlyphs" transform="rotate(90 571.3 460.2)" >DIGITAL (~PWM)</text>
</g>
<g fill="none" stroke="#FFF" stroke-width="1"><path d="M472.5 494.5l6 6v52l-6 6"/><path d="M573.5 394.5l-7 6v150.5l7 8"/></g>
<g shape-rendering="crispEdges">
<rect x="654" y="372" width="24" height="1" fill="#9A0C0C" />
<text x="622.4" y="376.8" font-size="9" fill="#000" textLength="26.2" lengthAdjust="spacingAndGlyphs" >AREF</text>
<rect x="654" y="394" width="24" height="1" fill="#9A0C0C" />
<text x="607.6" y="398.8" font-size="9" fill="#000" textLength="41" lengthAdjust="spacingAndGlyphs" >PB5/SCK</text>
<rect x="659" y="386" width="5" height="6" fill="#FF4040" />
<text x="665" y="392.5" font-size="9" fill="#000" textLength="11.4" lengthAdjust="spacingAndGlyphs" >13</text>
<rect x="654" y="406" width="24" height="1" fill="#9A0C0C" />
<text x="603.7" y="410.8" font-size="9" fill="#000" textLength="44.9" lengthAdjust="spacingAndGlyphs" >PB4/MISO</text>
<rect x="659" y="398" width="5" height="6" fill="#4040FF" />
<text x="665" y="404.5" font-size="9" fill="#000" textLength="11.4" lengthAdjust="spacingAndGlyphs" >12</text>
<rect x="654" y="418" width="24" height="1" fill="#9A0C0C" />
<text x="574.5" y="422.8" font-size="9" fill="#000" textLength="74.1" lengthAdjust="spacingAndGlyphs" >PB3/MOSI/OC2A</text>
<text x="568.5" y="423.6" font-size="10.5" fill="#FFF" textLength="6.2" lengthAdjust="spacingAndGlyphs" >~</text>
<rect x="659" y="410" width="5" height="6" fill="#FF4040" />
<text x="665" y="416.5" font-size="9" fill="#000" textLength="11.4" lengthAdjust="spacingAndGlyphs" >11</text>
<rect x="654" y="429" width="24" height="1" fill="#9A0C0C" />
<text x="585.6" y="433.8" font-size="9" fill="#000" textLength="63" lengthAdjust="spacingAndGlyphs" >PB2/SS/OC1B</text>
<text x="573.5" y="434.6" font-size="10.5" fill="#FFF" textLength="6.2" lengthAdjust="spacingAndGlyphs" >~</text>
<rect x="659" y="421" width="5" height="6" fill="#4040FF" />
<text x="665" y="427.5" font-size="9" fill="#000" textLength="11.4" lengthAdjust="spacingAndGlyphs" >10</text>
<rect x="654" y="441" width="24" height="1" fill="#9A0C0C" />
<text x="601.9" y="445.8" font-size="9" fill="#000" textLength="46.7" lengthAdjust="spacingAndGlyphs" >PB1/OC1A</text>
<text x="591.5" y="446.6" font-size="10.5" fill="#FFF" textLength="6.2" lengthAdjust="spacingAndGlyphs" >~</text>
<rect x="659" y="433" width="5" height="6" fill="#FF4040" />
<text x="665" y="439.5" font-size="9" fill="#000" textLength="5.4" lengthAdjust="spacingAndGlyphs" >9</text>
<rect x="654" y="453" width="24" height="1" fill="#9A0C0C" />
<text x="577.5" y="457.8" font-size="9" fill="#000" textLength="71.1" lengthAdjust="spacingAndGlyphs" >PB0/ICP1/CLKO</text>
<rect x="659" y="445" width="5" height="6" fill="#4040FF" />
<text x="665" y="451.5" font-size="9" fill="#000" textLength="5.4" lengthAdjust="spacingAndGlyphs" >8</text>
<rect x="654" y="476" width="24" height="1" fill="#9A0C0C" />
<text x="605.7" y="480.8" font-size="9" fill="#000" textLength="42.9" lengthAdjust="spacingAndGlyphs" >PD7/AIN1</text>
<rect x="659" y="468" width="5" height="6" fill="#FF4040" />
<text x="665" y="474.5" font-size="9" fill="#000" textLength="5.4" lengthAdjust="spacingAndGlyphs" >7</text>
<rect x="654" y="488" width="24" height="1" fill="#9A0C0C" />
<text x="605.7" y="492.8" font-size="9" fill="#000" textLength="42.9" lengthAdjust="spacingAndGlyphs" >PD6/AIN0</text>
<text x="597.3" y="493.6" font-size="10.5" fill="#FFF" textLength="6.2" lengthAdjust="spacingAndGlyphs" >~</text>
<rect x="659" y="480" width="5" height="6" fill="#828282" />
<text x="665" y="486.5" font-size="9" fill="#000" textLength="5.4" lengthAdjust="spacingAndGlyphs" >6</text>
<rect x="654" y="500" width="24" height="1" fill="#9A0C0C" />
<text x="615.6" y="504.8" font-size="9" fill="#000" textLength="33" lengthAdjust="spacingAndGlyphs" >PD5/T1</text>
<text x="592" y="505.6" font-size="10.5" fill="#FFF" textLength="6.2" lengthAdjust="spacingAndGlyphs" >~</text>
<rect x="659" y="492" width="5" height="6" fill="#FF4040" />
<text x="665" y="498.5" font-size="9" fill="#000" textLength="5.4" lengthAdjust="spacingAndGlyphs" >5</text>
<rect x="654" y="511" width="24" height="1" fill="#9A0C0C" />
<text x="593.3" y="515.8" font-size="9" fill="#000" textLength="55.3" lengthAdjust="spacingAndGlyphs" >PD4/T0/XCK</text>
<rect x="659" y="503" width="5" height="6" fill="#828282" />
<text x="665" y="509.5" font-size="9" fill="#000" textLength="5.4" lengthAdjust="spacingAndGlyphs" >4</text>
<rect x="654" y="523" width="24" height="1" fill="#9A0C0C" />
<text x="606.5" y="527.8" font-size="9" fill="#000" textLength="42.1" lengthAdjust="spacingAndGlyphs" >PD3/INT1</text>
<text x="597.3" y="528.6" font-size="10.5" fill="#FFF" textLength="6.2" lengthAdjust="spacingAndGlyphs" >~</text>
<rect x="659" y="515" width="5" height="6" fill="#828282" />
<text x="665" y="521.5" font-size="9" fill="#000" textLength="5.4" lengthAdjust="spacingAndGlyphs" >3</text>
<rect x="654" y="535" width="24" height="1" fill="#9A0C0C" />
<text x="606.5" y="539.8" font-size="9" fill="#000" textLength="42.1" lengthAdjust="spacingAndGlyphs" >PD2/INT0</text>
<rect x="659" y="527" width="5" height="6" fill="#FF4040" />
<text x="665" y="533.5" font-size="9" fill="#000" textLength="5.4" lengthAdjust="spacingAndGlyphs" >2</text>
<rect x="654" y="546" width="24" height="1" fill="#9A0C0C" />
<text x="607.5" y="550.8" font-size="9" fill="#000" textLength="41.1" lengthAdjust="spacingAndGlyphs" >PD1/TXD</text>
<rect x="659" y="538" width="5" height="6" fill="#828282" />
<text x="665" y="544.5" font-size="9" fill="#000" textLength="5.4" lengthAdjust="spacingAndGlyphs" >1</text>
<rect x="654" y="558" width="24" height="1" fill="#9A0C0C" />
<text x="607.5" y="562.8" font-size="9" fill="#000" textLength="41.1" lengthAdjust="spacingAndGlyphs" >PD0/RXD</text>
<rect x="659" y="550" width="5" height="6" fill="#828282" />
<text x="665" y="556.5" font-size="9" fill="#000" textLength="5.4" lengthAdjust="spacingAndGlyphs" >0</text>
<text x="589" y="550.4" font-size="8.5" fill="#FFF" textLength="10.6" lengthAdjust="spacingAndGlyphs" >TX</text>
<text x="589" y="562.4" font-size="8.5" fill="#FFF" textLength="10.6" lengthAdjust="spacingAndGlyphs" >RX</text>
<rect x="607" y="424" width="14" height="1" fill="#000" />
<rect x="373" y="412" width="24" height="1" fill="#9A0C0C" />
<rect x="381" y="415" width="7" height="7" fill="#828282" />
<text x="402.6" y="416.9" font-size="9" fill="#000" textLength="31.5" lengthAdjust="spacingAndGlyphs" >RESET</text>
<rect x="402" y="407" width="34" height="1" fill="#000" />
<rect x="373" y="494" width="24" height="1" fill="#9A0C0C" />
<text x="372.9" y="492.4" font-size="9" fill="#000" textLength="11.4" lengthAdjust="spacingAndGlyphs" >A0</text>
<rect x="386" y="485" width="6" height="6" fill="#828282" />
<text x="403" y="499.2" font-size="9" fill="#000" textLength="46.3" lengthAdjust="spacingAndGlyphs" >PC0/ADC0</text>
<rect x="373" y="506" width="24" height="1" fill="#9A0C0C" />
<text x="372.9" y="504.4" font-size="9" fill="#000" textLength="11.4" lengthAdjust="spacingAndGlyphs" >A1</text>
<rect x="386" y="497" width="6" height="6" fill="#828282" />
<text x="403" y="511.2" font-size="9" fill="#000" textLength="46.3" lengthAdjust="spacingAndGlyphs" >PC1/ADC1</text>
<rect x="373" y="517" width="24" height="1" fill="#9A0C0C" />
<text x="372.9" y="515.4" font-size="9" fill="#000" textLength="11.4" lengthAdjust="spacingAndGlyphs" >A2</text>
<rect x="386" y="508" width="6" height="6" fill="#828282" />
<text x="403" y="522.2" font-size="9" fill="#000" textLength="46.3" lengthAdjust="spacingAndGlyphs" >PC2/ADC2</text>
<rect x="373" y="529" width="24" height="1" fill="#9A0C0C" />
<text x="372.9" y="527.4" font-size="9" fill="#000" textLength="11.4" lengthAdjust="spacingAndGlyphs" >A3</text>
<rect x="386" y="520" width="6" height="6" fill="#828282" />
<text x="403" y="534.2" font-size="9" fill="#000" textLength="46.3" lengthAdjust="spacingAndGlyphs" >PC3/ADC3</text>
<rect x="373" y="541" width="24" height="1" fill="#9A0C0C" />
<text x="372.9" y="539.4" font-size="9" fill="#000" textLength="11.4" lengthAdjust="spacingAndGlyphs" >A4</text>
<rect x="386" y="532" width="6" height="6" fill="#828282" />
<text x="403" y="546.2" font-size="9" fill="#000" textLength="69.2" lengthAdjust="spacingAndGlyphs" >PC4/ADC4/SDA</text>
<rect x="373" y="552" width="24" height="1" fill="#9A0C0C" />
<text x="372.9" y="550.4" font-size="9" fill="#000" textLength="11.4" lengthAdjust="spacingAndGlyphs" >A5</text>
<rect x="386" y="543" width="6" height="6" fill="#828282" />
<text x="403" y="557.2" font-size="9" fill="#000" textLength="67.9" lengthAdjust="spacingAndGlyphs" >PC5/ADC5/SCL</text>
<text x="395.7" y="280" font-size="13" fill="#000" textLength="47" lengthAdjust="spacingAndGlyphs" >DUINO1</text>
<text x="395.5" y="591.3" font-size="9" fill="#000" textLength="82.7" lengthAdjust="spacingAndGlyphs" >ARDUINO UNO R3</text>
<text x="395.5" y="603.1" font-size="9" fill="#7C7C7C" textLength="35.5" lengthAdjust="spacingAndGlyphs" >&lt;TEXT&gt;</text>
<rect x="677" y="406" width="363" height="1" fill="#0B540B" />
<rect x="1039" y="372" width="1" height="35" fill="#0B540B" />
<rect x="1039" y="372" width="47" height="1" fill="#0B540B" />
<rect x="1085" y="278" width="1" height="95" fill="#0B540B" />
<rect x="677" y="418" width="398" height="1" fill="#0B540B" />
<rect x="1074" y="278" width="1" height="141" fill="#0B540B" />
<rect x="677" y="429" width="386" height="1" fill="#0B540B" />
<rect x="1062" y="278" width="1" height="152" fill="#0B540B" />
<rect x="677" y="441" width="374" height="1" fill="#0B540B" />
<rect x="1050" y="278" width="1" height="164" fill="#0B540B" />
<rect x="677" y="453" width="304" height="1" fill="#0B540B" />
<rect x="980" y="278" width="1" height="176" fill="#0B540B" />
<rect x="677" y="476" width="281" height="1" fill="#0B540B" />
<rect x="957" y="278" width="1" height="199" fill="#0B540B" />
<rect x="968" y="278" width="1" height="83" fill="#0B540B" />
<rect x="945" y="360" width="24" height="1" fill="#0B540B" />
<rect x="945" y="348" width="1" height="13" fill="#0B540B" />
<rect x="887" y="348" width="59" height="1" fill="#0B540B" />
<rect x="887" y="348" width="1" height="25" fill="#0B540B" />
<rect x="875" y="372" width="24" height="1" fill="#0B540B" />
<rect x="881" y="378" width="13" height="1" fill="#0B540B" />
<rect x="886" y="383" width="4" height="1" fill="#0B540B" />
<rect x="677" y="500" width="222" height="1" fill="#0B540B" />
<rect x="898" y="500" width="1" height="12" fill="#0B540B" />
<rect x="898" y="511" width="83" height="1" fill="#0B540B" />
<rect x="677" y="535" width="13" height="1" fill="#0B540B" />
<rect x="689" y="535" width="1" height="36" fill="#0B540B" />
<rect x="689" y="570" width="117" height="1" fill="#0B540B" />
<rect x="805" y="535" width="1" height="36" fill="#0B540B" />
<rect x="980" y="511" width="13" height="1" fill="#9A0C0C" />
<rect x="1027" y="511" width="13" height="1" fill="#9A0C0C" />
<rect x="992" y="507" width="36" height="10" fill="#9A0C0C" />
<rect x="993" y="508" width="34" height="8" fill="#C8C8AA" />
<rect x="977" y="502" width="7" height="7" fill="#FF4040" />
<rect x="1039" y="511" width="12" height="1" fill="#0B540B" />
<rect x="1050" y="511" width="1" height="13" fill="#0B540B" />
<rect x="1050" y="523" width="48" height="1" fill="#0B540B" />
<text x="991.8" y="502.8" font-size="13" fill="#000" textLength="15.2" lengthAdjust="spacingAndGlyphs" >R1</text>
<text x="991.8" y="526.7" font-size="9" fill="#000" textLength="15" lengthAdjust="spacingAndGlyphs" >10k</text>
<text x="991.8" y="538.7" font-size="9" fill="#7C7C7C" textLength="35" lengthAdjust="spacingAndGlyphs" >&lt;TEXT&gt;</text>
<rect x="1097" y="523" width="13" height="1" fill="#9A0C0C" />
<rect x="1109" y="505" width="7" height="36" fill="#9A0C0C" />
<rect x="1110" y="506" width="5" height="34" fill="#C8C8AA" />
<rect x="1132" y="488" width="1" height="13" fill="#9A0C0C" />
<rect x="1132" y="546" width="1" height="13" fill="#9A0C0C" />
</g>
<line x1="1132.5" y1="500.5" x2="1116" y2="516.5" stroke="#9A0C0C" stroke-width="1.1" />
<line x1="1116" y1="530" x2="1132.5" y2="546" stroke="#9A0C0C" stroke-width="1.1" />
<polygon points="1126.7,535.4 1121.1,541 1131.9,545.6" fill="#C8C8AA" stroke="#9A0C0C" stroke-width="1.1"/>
<g shape-rendering="crispEdges">
<rect x="1123" y="555" width="7" height="7" fill="#4040FF" />
<rect x="1132" y="452" width="1" height="13" fill="#9A0C0C" />
<rect x="1132" y="464" width="1" height="25" fill="#0B540B" />
<rect x="1132" y="558" width="1" height="48" fill="#0B540B" />
<rect x="1121" y="605" width="24" height="1" fill="#0B540B" />
<rect x="1127" y="611" width="12" height="1" fill="#0B540B" />
<rect x="1131" y="617" width="4" height="1" fill="#0B540B" />
<text x="1139.8" y="511.4" font-size="13" fill="#000" textLength="16.2" lengthAdjust="spacingAndGlyphs" >Q1</text>
<text x="1139.8" y="525.5" font-size="9" fill="#000" textLength="33" lengthAdjust="spacingAndGlyphs" >2N2222</text>
<text x="1139.8" y="537.5" font-size="9" fill="#7C7C7C" textLength="35.5" lengthAdjust="spacingAndGlyphs" >&lt;TEXT&gt;</text>
<rect x="1132" y="394" width="1" height="13" fill="#9A0C0C" />
<rect x="1132" y="360" width="1" height="35" fill="#0B540B" />
<rect x="1132" y="360" width="71" height="1" fill="#0B540B" />
<rect x="1202" y="337" width="1" height="24" fill="#0B540B" />
</g>
<circle cx="1132.5" cy="429.5" r="23" fill="#000" stroke="#9A0C0C" stroke-width="1.2"/>
<path d="M1137.93 416.06A14.5 14.5 0 0 1 1146.63 432.76M1127.07 442.94A14.5 14.5 0 0 1 1118.37 426.24" fill="none" stroke="#00BEC8" stroke-width="5.6"/>
<circle cx="1132.5" cy="429.5" r="4.6" fill="#C8C8AA" stroke="#9A0C0C" stroke-width="1"/>
<polygon points="1202.5,325.5 1197,337.5 1208.2,337.5" fill="none" stroke="#0B540B" stroke-width="1.1"/>
<line x1="1202.5" y1="325.5" x2="1202.5" y2="337" stroke="#0B540B" stroke-width="1.1" />
<text x="1191.2" y="317.6" font-size="9.5" fill="#000" textLength="21.6" lengthAdjust="spacingAndGlyphs" >+12v</text>
<polygon points="279.5,383.5 273.3,394.5 285.8,394.5" fill="none" stroke="#0B540B" stroke-width="1.1"/>
<text x="267.3" y="376.6" font-size="9.5" fill="#000" textLength="16.6" lengthAdjust="spacingAndGlyphs" >+5v</text>
<g shape-rendering="crispEdges">
<rect x="279" y="384" width="1" height="58" fill="#0B540B" />
<rect x="279" y="441" width="1" height="19" fill="#9A0C0C" />
<rect x="274" y="459" width="11" height="36" fill="#9A0C0C" />
<rect x="275" y="460" width="9" height="34" fill="#C8C8AA" />
<rect x="279" y="494" width="1" height="18" fill="#9A0C0C" />
<rect x="279" y="511" width="1" height="48" fill="#0B540B" />
<rect x="267" y="558" width="25" height="1" fill="#0B540B" />
<rect x="273" y="564" width="13" height="1" fill="#0B540B" />
<rect x="278" y="570" width="4" height="1" fill="#0B540B" />
<rect x="286" y="487" width="6" height="1" fill="#9A0C0C" />
<rect x="291" y="476" width="1" height="12" fill="#9A0C0C" />
<rect x="291" y="476" width="12" height="1" fill="#9A0C0C" />
<rect x="302" y="476" width="60" height="1" fill="#0B540B" />
<rect x="361" y="476" width="1" height="19" fill="#0B540B" />
<rect x="361" y="494" width="13" height="1" fill="#0B540B" />
<rect x="270" y="508" width="7" height="7" fill="#4040FF" />
<rect x="300" y="479" width="6" height="7" fill="#828282" />
</g>
<path d="M289.5 484.5l-4 3 4 3" fill="none" stroke="#9A0C0C" stroke-width="1.1"/>
<text x="282.3" y="485" font-size="7" fill="#C00000" font-weight="bold" textLength="15.5" lengthAdjust="spacingAndGlyphs" transform="rotate(-90 282.3 485)" >18%</text>
<circle cx="265.5" cy="463.5" r="4.6" fill="#FF0000"/>
<circle cx="265.5" cy="463.5" r="3.2" fill="#400000"/>
<path d="M265.5 466.0v-5M263.5 463.0l2-2 2 2" stroke="#FF0000" stroke-width="1.1" fill="none"/>
<circle cx="265.5" cy="489.5" r="4.6" fill="#FF0000"/>
<circle cx="265.5" cy="489.5" r="3.2" fill="#400000"/>
<path d="M265.5 487.0v5M263.5 490.0l2 2 2-2" stroke="#FF0000" stroke-width="1.1" fill="none"/>
<text x="292.9" y="436.5" font-size="13" fill="#000" textLength="24.2" lengthAdjust="spacingAndGlyphs" >RV1</text>
<text x="293.1" y="521.6" font-size="9" fill="#000" textLength="9" lengthAdjust="spacingAndGlyphs" >1k</text>
<text x="293.1" y="533.6" font-size="9" fill="#7C7C7C" textLength="35" lengthAdjust="spacingAndGlyphs" >&lt;TEXT&gt;</text>
<text x="700" y="521.6" font-size="9" fill="#0000C8" textLength="85.1" lengthAdjust="spacingAndGlyphs" >DUINO1(PD2/INT0)</text>
<text x="748.6" y="532.5" font-size="9" fill="#7C7C7C" textLength="35.5" lengthAdjust="spacingAndGlyphs" >&lt;TEXT&gt;</text>
<g fill="none" stroke="#0000C8" stroke-width="1.1"><path d="M793.4 517.1L787.3 523.2 797.9 528.2z"/><path d="M797.9 528.2L805.6 535.4"/><path d="M805 530.5h2.5l2.3-12h11.8l2.3 12h3.2"/><circle cx="770.5" cy="546.5" r="3.7"/><path d="M765 546.5h11M770.5 541v11.500"/></g>
</g>
<defs><linearGradient id="pg" x1="0" y1="0" x2="1" y2="1"><stop offset="0" stop-color="#FFFFFF"/><stop offset="0.6" stop-color="#F4F8FA"/><stop offset="1" stop-color="#B9CCD6"/></linearGradient><linearGradient id="lens" x1="0" y1="0" x2="1" y2="1"><stop offset="0" stop-color="#EAF3F8"/><stop offset="1" stop-color="#9FBFD2"/></linearGradient><linearGradient id="ares" x1="0" y1="0" x2="0" y2="1"><stop offset="0" stop-color="#F05A28"/><stop offset="0.7" stop-color="#E03C10"/><stop offset="1" stop-color="#B02800"/></linearGradient><pattern id="dith" width="2" height="2" patternUnits="userSpaceOnUse"><rect width="2" height="2" fill="#FFFFFF"/><rect width="1" height="1" fill="#F0F0F0"/><rect x="1" y="1" width="1" height="1" fill="#F0F0F0"/></pattern></defs>
<path d="M9.5 46.5H16.5L20.5 50.5V60.5H9.5z" fill="url(#pg)" stroke="#404040" stroke-width="1"/>
<path d="M16.5 46.5V50.5H20.5" fill="#FFFFFF" stroke="#404040" stroke-width="1"/>
<path d="M29.5 58.5V48.5l1-1h4l1.5 1.5h5.5v2.5" fill="#E9DC7A" stroke="#6B5E1A" stroke-width="1"/><path d="M29.5 58.5l3.5-7.5h12l-3.5 7.5z" fill="#F2E88C" stroke="#6B5E1A" stroke-width="1"/><path d="M37 47.5c2-3 5.500-3 7.500 0" fill="none" stroke="#2A5FB8" stroke-width="1.3"/><path d="M45.500 44.500v4h-4z" fill="#2A5FB8"/>
<path d="M50 45h16v16h-14l-2-2z" fill="#A0A0A0"/>
<rect x="54" y="46" width="1" height="1" fill="#FFFFFF" />
<path d="M85 45h10v13h-6v3h-8l-2-2v-9l2-2h4z" fill="#A0A0A0"/>
<rect x="82" y="51" width="1" height="1" fill="#FFFFFF" />
<path d="M81 49.500c0-1.500 1.200-2.500 2.500-2.500s2.500 1 2.500 2.500" fill="none" stroke="#F0F0F0" stroke-width="1"/>
<rect x="100" y="45" width="9" height="12" fill="#505050" />
<rect x="101" y="46" width="7" height="10" fill="#E8EEF2" />
<rect x="102" y="48" width="1" height="1" fill="#E04020" />
<rect x="102" y="51" width="1" height="1" fill="#E04020" />
<rect x="102" y="54" width="1" height="1" fill="#E04020" />
<rect x="104" y="48" width="1" height="1" fill="#E04020" />
<rect x="104" y="51" width="1" height="1" fill="#E04020" />
<rect x="104" y="54" width="1" height="1" fill="#E04020" />
<rect x="106" y="48" width="1" height="1" fill="#E04020" />
<rect x="106" y="51" width="1" height="1" fill="#E04020" />
<rect x="106" y="54" width="1" height="1" fill="#E04020" />
<rect x="107" y="51" width="9" height="10" fill="#2B3FB0" />
<rect x="109" y="51" width="5" height="4" fill="#C8D4E8" />
<rect x="109" y="57" width="5" height="4" fill="#1A237E" />
<rect x="111" y="58" width="2" height="2" fill="#E8EEF2" />
<path d="M103.500 49c1.500-3.500 6-4.500 9.500-2" fill="none" stroke="#2A5FB8" stroke-width="1.3"/><path d="M114.500 44.500v4.500h-4.500z" fill="#1E3FA0"/>
<rect x="133" y="44" width="8" height="5" fill="#F4F8FF" stroke="#5A78B0" stroke-width="1"/>
<path d="M130.500 49.500h13c1 0 1.500 .5 1.500 1.500v6.500h-16v-6.500c0-1 .5-1.500 1.500-1.500z" fill="#C9D3DE" stroke="#6A7A90" stroke-width="1"/>
<rect x="131" y="55" width="12" height="2" fill="#202020" />
<rect x="133" y="55" width="8" height="5" fill="#F4F8FF" stroke="#5A78B0" stroke-width="1"/>
<rect x="136" y="51" width="3" height="3" fill="#00C020" />
<rect x="134" y="46" width="5" height="1" fill="#9FB4D4" />
<rect x="134" y="58" width="5" height="1" fill="#9FB4D4" />
<path d="M152.5 46.5H159.5L162.5 49.5V58.5H152.5z" fill="url(#pg)" stroke="#404040" stroke-width="1"/>
<path d="M159.5 46.5V49.5H162.5" fill="#FFFFFF" stroke="#404040" stroke-width="1"/>
<rect x="155" y="51" width="5" height="7" fill="#B8C4CC" />
<path d="M155 51h1v1h-1zM155 57h1v1h-1zM157 51h1v1h-1zM157 57h1v1h-1zM159 51h1v1h-1zM159 57h1v1h-1zM155 51h1v1h-1zM159 51h1v1h-1zM155 53h1v1h-1zM159 53h1v1h-1zM155 55h1v1h-1zM159 55h1v1h-1zM155 57h1v1h-1zM159 57h1v1h-1z" fill="#404850" shape-rendering="crispEdges"/>
<path d="M188.5 45.5H197.5L200.5 48.5V60.5H188.5z" fill="url(#pg)" stroke="#404040" stroke-width="1"/>
<path d="M197.5 45.5V48.5H200.5" fill="#FFFFFF" stroke="#404040" stroke-width="1"/>
<g fill="none" stroke="#1FA01F" stroke-width="1.700"><path d="M191.500 52.500c0-2.500 2-4 4.500-4h1"/><path d="M198.500 54c0 2.500-2 4-4.500 4h-1"/></g><path d="M196 46l3 2.500-3 2.500z" fill="#1FA01F"/><path d="M194.500 55.500l-3 2.500 3 2.500z" fill="#1FA01F"/>
<rect x="206" y="42" width="21" height="22" fill="url(#dith)" />
<rect x="206" y="42" width="21" height="1" fill="#D8D8D8" />
<rect x="206" y="42" width="1" height="22" fill="#D8D8D8" />
<rect x="206" y="63" width="21" height="1" fill="#FFFFFF" />
<rect x="226" y="42" width="1" height="22" fill="#FFFFFF" />
<rect x="210" y="47" width="1" height="3" fill="#000" />
<rect x="209" y="48" width="3" height="1" fill="#000" />
<rect x="210" y="53" width="1" height="3" fill="#000" />
<rect x="209" y="54" width="3" height="1" fill="#000" />
<rect x="210" y="59" width="1" height="3" fill="#000" />
<rect x="209" y="60" width="3" height="1" fill="#000" />
<rect x="216" y="47" width="1" height="3" fill="#000" />
<rect x="215" y="48" width="3" height="1" fill="#000" />
<rect x="216" y="53" width="1" height="3" fill="#000" />
<rect x="215" y="54" width="3" height="1" fill="#000" />
<rect x="216" y="59" width="1" height="3" fill="#000" />
<rect x="215" y="60" width="3" height="1" fill="#000" />
<rect x="222" y="47" width="1" height="3" fill="#000" />
<rect x="221" y="48" width="3" height="1" fill="#000" />
<rect x="222" y="53" width="1" height="3" fill="#000" />
<rect x="221" y="54" width="3" height="1" fill="#000" />
<rect x="222" y="59" width="1" height="3" fill="#000" />
<rect x="221" y="60" width="3" height="1" fill="#000" />
<rect x="213" y="48" width="1" height="1" fill="#404040" />
<rect x="213" y="54" width="1" height="1" fill="#404040" />
<rect x="213" y="60" width="1" height="1" fill="#404040" />
<rect x="219" y="48" width="1" height="1" fill="#404040" />
<rect x="219" y="54" width="1" height="1" fill="#404040" />
<rect x="219" y="60" width="1" height="1" fill="#404040" />
<rect x="210" y="51" width="1" height="1" fill="#404040" />
<rect x="210" y="57" width="1" height="1" fill="#404040" />
<rect x="216" y="51" width="1" height="1" fill="#404040" />
<rect x="216" y="57" width="1" height="1" fill="#404040" />
<rect x="222" y="51" width="1" height="1" fill="#404040" />
<rect x="222" y="57" width="1" height="1" fill="#404040" />
<rect x="237" y="52" width="15" height="1" fill="#000" />
<rect x="244" y="45" width="1" height="15" fill="#000" />
<rect x="241" y="49" width="7" height="7" fill="#B8B03C" />
<rect x="241" y="49" width="7" height="1" fill="#77701C" />
<rect x="241" y="55" width="7" height="1" fill="#77701C" />
<rect x="241" y="49" width="1" height="7" fill="#77701C" />
<rect x="247" y="49" width="1" height="7" fill="#77701C" />
<rect x="244" y="50" width="1" height="5" fill="#8C8428" />
<rect x="242" y="52" width="5" height="1" fill="#8C8428" />
<path d="M273.500 45.500l3.500 3.500h-2.500v3.500h3.500v-2.500l3.500 3.500-3.500 3.500v-2.500h-3.500v3.500h2.500l-3.500 3.500-3.500-3.500h2.500v-3.500h-3.500v2.500l-3.500-3.500 3.500-3.500v2.500h3.500v-3.500h-2.500z" fill="#2E72E0" stroke="#143C96" stroke-width="0.800"/>
<path d="M296.0 54.0L302 60" stroke="#4A4A4A" stroke-width="3.400" stroke-linecap="round"/>
<path d="M297.0 54.5L301.5 59" stroke="#C8C8C8" stroke-width="1.100" stroke-linecap="round"/>
<circle cx="292.5" cy="50.5" r="5.5" fill="url(#lens)" stroke="#4A4A4A" stroke-width="1.500"/>
<rect x="289" y="50" width="7" height="1.2" fill="#303030" />
<rect x="292" y="47" width="1.2" height="7" fill="#303030" />
<path d="M317.4 54.0L323.3 60" stroke="#4A4A4A" stroke-width="3.400" stroke-linecap="round"/>
<path d="M318.4 54.5L322.8 59" stroke="#C8C8C8" stroke-width="1.100" stroke-linecap="round"/>
<circle cx="313.9" cy="50.5" r="5.5" fill="url(#lens)" stroke="#4A4A4A" stroke-width="1.500"/>
<rect x="310.5" y="50" width="7" height="1.2" fill="#303030" />
<path d="M338.4 54.0L344.4 60" stroke="#4A4A4A" stroke-width="3.400" stroke-linecap="round"/>
<path d="M339.4 54.5L343.9 59" stroke="#C8C8C8" stroke-width="1.100" stroke-linecap="round"/>
<circle cx="334.9" cy="50.5" r="5.5" fill="url(#lens)" stroke="#4A4A4A" stroke-width="1.500"/>
<rect x="332" y="48" width="6" height="5" fill="#8A8A8A" stroke="#505050" stroke-width="1"/>
<path d="M350 48h1v1h-1zM350 60h1v1h-1zM352 48h1v1h-1zM352 60h1v1h-1zM354 48h1v1h-1zM354 60h1v1h-1zM356 48h1v1h-1zM356 60h1v1h-1zM358 48h1v1h-1zM358 60h1v1h-1zM350 48h1v1h-1zM358 48h1v1h-1zM350 50h1v1h-1zM358 50h1v1h-1zM350 52h1v1h-1zM358 52h1v1h-1zM350 54h1v1h-1zM358 54h1v1h-1zM350 56h1v1h-1zM358 56h1v1h-1zM350 58h1v1h-1zM358 58h1v1h-1zM350 60h1v1h-1zM358 60h1v1h-1z" fill="#000" shape-rendering="crispEdges"/>
<path d="M361.2 53.5L365.2 58" stroke="#4A4A4A" stroke-width="3.400" stroke-linecap="round"/>
<path d="M362.2 54L364.7 57" stroke="#C8C8C8" stroke-width="1.100" stroke-linecap="round"/>
<circle cx="357.7" cy="50" r="5" fill="url(#lens)" stroke="#4A4A4A" stroke-width="1.500"/>
<rect x="359" y="46" width="1" height="8" fill="#9AB0BE" />
<path d="M388 46v7h7l-2.500-2.500c1.500-1 3.500-.5 4 1 .8 2.200-1.500 4.500-5 8l2.500 2c5-4 8-7.500 6.500-11.500-1.200-3.200-6-4-9.800-1.200z" fill="#A0A0A0"/>
<path d="M423 46v7h-7l2.500-2.500c-1.500-1-3.500-.5-4 1-.8 2.200 1.500 4.500 5 8l-2.500 2c-5-4-8-7.500-6.500-11.500 1.200-3.200 6-4 9.800-1.200z" fill="#A0A0A0"/>
<g stroke="#A0A0A0" fill="none"><path d="M440.500 45.500l8.500 11M450.500 45.500l-8.500 11" stroke-width="3.300"/></g>
<circle cx="441.800" cy="58" r="3.200" fill="#A0A0A0"/><circle cx="449.200" cy="58" r="3.200" fill="#A0A0A0"/>
<rect x="441" y="57" width="2" height="2" fill="#F0F0F0" />
<rect x="448" y="57" width="2" height="2" fill="#F0F0F0" />
<path d="M447.500 50l3-4" stroke="#E4E4E4" stroke-width="0.900"/>
<path d="M459.5 46.5H464.5L466.5 48.5V55.5H459.5z" fill="#FFFFFF" stroke="#303038" stroke-width="1"/>
<path d="M464.5 46.5V48.5H466.5" fill="#FFFFFF" stroke="#303038" stroke-width="1"/>
<rect x="461" y="49" width="3" height="1" fill="#7A9CC0" />
<rect x="461" y="51" width="3" height="1" fill="#7A9CC0" />
<rect x="461" y="53" width="3" height="1" fill="#7A9CC0" />
<path d="M465.5 49.5H471.5L473.5 51.5V58.5H465.5z" fill="#FFFFFF" stroke="#1C2468" stroke-width="1"/>
<path d="M471.5 49.5V51.5H473.5" fill="#FFFFFF" stroke="#1C2468" stroke-width="1"/>
<rect x="467" y="52" width="5" height="1" fill="#7A9CC0" />
<rect x="467" y="54" width="5" height="1" fill="#7A9CC0" />
<rect x="467" y="56" width="5" height="1" fill="#7A9CC0" />
<path d="M482 47l3-2h6l2 2v3h2v11h-12v-4h-4v-9z" fill="#A0A0A0"/>
<path d="M484 47.500l2.500-2" stroke="#F0F0F0" stroke-width="1"/>
<rect x="487" y="52" width="1" height="1" fill="#F0F0F0" />
<path d="M507.500 45h16.500v5h-5v5.500h5v5.500h-16.500v-5.500h5v-5.500h-5z" fill="#A0A0A0"/>
<path d="M529 45h16v5.500h-5v5h5v5.500h-16v-5.500h5v-5h-5z" fill="#A0A0A0"/>
<rect x="530" y="46" width="14" height="3" fill="#F0F0F0" />
<rect x="535" y="49" width="4" height="1" fill="#A0A0A0" />
<rect x="550" y="45" width="16" height="16" fill="#A0A0A0" />
<rect x="571" y="45" width="16" height="16" fill="#A0A0A0" />
<path d="M609.4 54.4L615.5 59.5" stroke="#A0A0A0" stroke-width="3.200" stroke-linecap="round"/>
<circle cx="606.4" cy="51.4" r="6" fill="#A0A0A0"/>
<rect x="612" y="51" width="4" height="1" fill="#A0A0A0" />
<path d="M626 49.500l9 5-9 5z" fill="#A0A0A0"/>
<rect x="621" y="52" width="6" height="1" fill="#A0A0A0" />
<rect x="621" y="56" width="6" height="1" fill="#A0A0A0" />
<rect x="634" y="54" width="4" height="1" fill="#A0A0A0" />
<rect x="630" y="47" width="7" height="1.4" fill="#A0A0A0" />
<rect x="632.8" y="44.5" width="1.4" height="6.5" fill="#A0A0A0" />
<path d="M645 47h7l4-2.500v3l2-.5v4l-2 3v5h-11z" fill="#A0A0A0"/>
<rect x="642" y="48" width="3" height="1" fill="#A0A0A0" />
<rect x="656" y="50" width="2" height="1" fill="#A0A0A0" />
<rect x="646" y="59" width="1" height="2" fill="#A0A0A0" />
<rect x="642" y="51" width="3" height="1" fill="#A0A0A0" />
<rect x="656" y="53" width="2" height="1" fill="#A0A0A0" />
<rect x="649" y="59" width="1" height="2" fill="#A0A0A0" />
<rect x="642" y="54" width="3" height="1" fill="#A0A0A0" />
<rect x="656" y="56" width="2" height="1" fill="#A0A0A0" />
<rect x="652" y="59" width="1" height="2" fill="#A0A0A0" />
<rect x="642" y="57" width="3" height="1" fill="#A0A0A0" />
<rect x="656" y="59" width="2" height="1" fill="#A0A0A0" />
<rect x="655" y="59" width="1" height="2" fill="#A0A0A0" />
<path d="M664 60l9.500-10" stroke="#A0A0A0" stroke-width="2.800" stroke-linecap="round"/>
<path d="M670 47.500c2-2 5-2.500 7-.5l1.500 2.500-2 2-2.500-2.500-2.500 1z" fill="#A0A0A0"/>
<rect x="698" y="42" width="21" height="22" fill="url(#dith)" />
<rect x="698" y="42" width="21" height="1" fill="#D8D8D8" />
<rect x="698" y="42" width="1" height="22" fill="#D8D8D8" />
<rect x="698" y="63" width="21" height="1" fill="#FFFFFF" />
<rect x="718" y="42" width="1" height="22" fill="#FFFFFF" />
<path d="M707 48.500h4c2 0 2.500 1 2.500 2.500s-.5 2.500-2.500 2.500h-1.500c-1.500 0-2 .8-2 2.500s.5 3 2.500 3h1" fill="none" stroke="#1450C8" stroke-width="1.500"/>
<path d="M709.500 51.500h-2.500c-2 0-3 1-3 3.500s1 4 3 4h2" fill="none" stroke="#E04010" stroke-width="1.500"/>
<rect x="701" y="46" width="7" height="4" fill="#55B030" stroke="#2E7018" stroke-width="0.800"/>
<rect x="710" y="57" width="7" height="4" fill="#55B030" stroke="#2E7018" stroke-width="0.800"/>
<path d="M730 58v-5l2-5v-2h3v2l1.500 3h2l1.500-3v-2h3v2l2 5v5h-5v-4h-5v4z" fill="#4A4E54"/>
<rect x="731" y="53" width="3" height="5" fill="#C6DAE8" />
<rect x="741" y="53" width="3" height="5" fill="#C6DAE8" />
<rect x="732" y="47" width="2" height="1" fill="#C6DAE8" />
<rect x="741" y="47" width="2" height="1" fill="#C6DAE8" />
<path d="M751.500 59l9-9" stroke="#A0A0A0" stroke-width="2.600" stroke-linecap="round"/>
<path d="M758.500 49.500c-.5-2.500 1.500-4.500 4.500-4l-2 2.500 1.500 1.500 2.500-2c.5 3-1.500 5-4 4.500z" fill="#A0A0A0"/>
<rect x="750" y="46" width="6" height="1" fill="#A0A0A0" />
<rect x="750" y="48" width="6" height="1" fill="#A0A0A0" />
<text x="760.5" y="61" font-size="9" fill="#A0A0A0" >A</text>
<path d="M780.5 45.5H789.5L792.5 48.5V60.5H780.5z" fill="#1E1E1E" stroke="#202020" stroke-width="1"/>
<path d="M789.5 45.5V48.5H792.5" fill="#FFFFFF" stroke="#202020" stroke-width="1"/>
<g fill="none" stroke="#40E020" stroke-width="1"><path d="M782.500 48.500h5v2M782.500 52.500h3M782.500 56.500h3M790.500 52.500h-2M790.500 56.500h-2M784.500 58.500h5v-2"/></g>
<rect x="785" y="50" width="3" height="7" fill="#70E0F0" />
<rect x="786" y="52" width="1" height="3" fill="#1E1E1E" />
<path d="M801 46h8l4 4v11h-12z" fill="#A0A0A0"/>
<rect x="802" y="47" width="1" height="1" fill="#FFFFFF" />
<path d="M823 46h12v14h-12z" fill="#A0A0A0"/>
<path d="M821 45.500l3.500 3.500M837 45.500l-3.500 3.500M821 60.500l3.500-3.500M837 60.500l-3.500-3.500" stroke="#A0A0A0" stroke-width="1.600"/>
<rect x="824" y="47" width="1" height="1" fill="#FFFFFF" />
<path d="M846 45h8v6h-2l3 5h3v5h-6v-5l-2.500-4-2.500 4v5h-6v-5h3l3-5h-1z" fill="#A0A0A0"/>
<path d="M853.500 48c3 .5 4 3 3.500 6" fill="none" stroke="#A0A0A0" stroke-width="1.300"/>
<path d="M872.5 46.5H880.5L883.5 49.5V60.5H872.5z" fill="url(#pg)" stroke="#404040" stroke-width="1"/>
<path d="M880.5 46.5V49.5H883.5" fill="#FFFFFF" stroke="#404040" stroke-width="1"/>
<text x="874.2" y="58.5" font-size="11" fill="#8C8C28" font-weight="bold" >$</text>
<rect x="877" y="49" width="1" height="10" fill="#8C8C28" />
<path d="M893.5 46.5H901.5L904.5 49.5V60.5H893.5z" fill="url(#pg)" stroke="#404040" stroke-width="1"/>
<path d="M901.5 46.5V49.5H904.5" fill="#FFFFFF" stroke="#404040" stroke-width="1"/>
<path d="M901.500 49l-4.500 5.500h3.500l-4 5" fill="none" stroke="#1E78E6" stroke-width="1.300"/>
<rect x="921" y="45" width="16" height="16" fill="url(#ares)" />
<text x="922.3" y="57" font-size="13" fill="#FFFFFF" textLength="13.5" lengthAdjust="spacingAndGlyphs" >ARES</text>
<rect x="925" y="58" width="11" height="1" fill="#FFFFFF" />
<rect x="0" y="76" width="20" height="22" fill="url(#dith)" />
<rect x="0" y="76" width="20" height="1" fill="#D8D8D8" />
<rect x="0" y="76" width="1" height="22" fill="#D8D8D8" />
<rect x="0" y="97" width="20" height="1" fill="#FFFFFF" />
<rect x="19" y="76" width="1" height="22" fill="#FFFFFF" />
<rect x="0" y="76" width="19" height="1" fill="#909090" />
<path d="M6 80.500v12.500l3-2.800 2.300 5 2.200-1-2.300-4.900h4.200z" fill="#202020"/>
<path d="M5.500 102.500v12l7.500-6z" fill="#D2CB52" stroke="#8A8420" stroke-width="1"/>
<rect x="1" y="105" width="4" height="1" fill="#8A8420" />
<rect x="1" y="111" width="4" height="1" fill="#8A8420" />
<rect x="13" y="108" width="4" height="1" fill="#8A8420" />
<rect x="1" y="130" width="16" height="1" fill="#202020" />
<rect x="8" y="123" width="1" height="16" fill="#202020" />
<rect x="5" y="127" width="7" height="7" fill="#1A3C90" />
<rect x="6" y="128" width="5" height="5" fill="#2A6CE8" />
<path d="M1 147h1v1h-1zM1 158h1v1h-1zM3 147h1v1h-1zM3 158h1v1h-1zM5 147h1v1h-1zM5 158h1v1h-1zM7 147h1v1h-1zM7 158h1v1h-1zM9 147h1v1h-1zM9 158h1v1h-1zM11 147h1v1h-1zM11 158h1v1h-1zM13 147h1v1h-1zM13 158h1v1h-1zM15 147h1v1h-1zM15 158h1v1h-1zM17 147h1v1h-1zM17 158h1v1h-1zM1 147h1v1h-1zM17 147h1v1h-1zM1 149h1v1h-1zM17 149h1v1h-1zM1 151h1v1h-1zM17 151h1v1h-1zM1 153h1v1h-1zM17 153h1v1h-1zM1 155h1v1h-1zM17 155h1v1h-1zM1 157h1v1h-1zM17 157h1v1h-1z" fill="#303030" shape-rendering="crispEdges"/>
<text x="3" y="155.8" font-size="8.5" fill="#1438B4" font-weight="bold" textLength="12.5" lengthAdjust="spacingAndGlyphs" >LBL</text>
<path d="M3 167.5h13" stroke="#303030" stroke-width="1" stroke-dasharray="4 1"/>
<path d="M3 171.5h13" stroke="#303030" stroke-width="1" stroke-dasharray="2 1"/>
<path d="M3 175.5h13" stroke="#303030" stroke-width="1" stroke-dasharray="4 1"/>
<path d="M3 179.5h13" stroke="#303030" stroke-width="1" stroke-dasharray="2 1"/>
<rect x="1" y="196" width="17" height="2" fill="#1E50D0" />
<rect x="5" y="189" width="2" height="15" fill="#1E50D0" />
<rect x="12" y="189" width="2" height="15" fill="#1E50D0" />
<rect x="5" y="211" width="9" height="15" fill="#D2CB52" stroke="#8A8420" stroke-width="1"/>
<rect x="1" y="214" width="4" height="1" fill="#8A8420" />
<rect x="1" y="222" width="4" height="1" fill="#8A8420" />
<rect x="14" y="214" width="4" height="1" fill="#8A8420" />
<rect x="14" y="222" width="4" height="1" fill="#8A8420" />
<path d="M3.500 238.500h9l3 2.500-3 2.500h-9z" fill="#D2CB52" stroke="#8A8420" stroke-width="1"/>
<path d="M15.500 246.500h-9l-3 2.500 3 2.500h9z" fill="#D2CB52" stroke="#8A8420" stroke-width="1"/>
<path d="M6.500 259.500v13l8.500-6.500z" fill="none" stroke="#303030" stroke-width="1.200"/>
<rect x="1" y="262" width="2" height="1" fill="#108080" />
<rect x="4" y="262" width="2" height="1" fill="#108080" />
<rect x="1" y="266" width="2" height="1" fill="#108080" />
<rect x="4" y="266" width="2" height="1" fill="#108080" />
<rect x="1" y="270" width="2" height="1" fill="#108080" />
<rect x="4" y="270" width="2" height="1" fill="#108080" />
<rect x="15" y="266" width="3" height="1" fill="#108080" />
<rect x="3" y="280" width="1" height="16" fill="#202020" />
<rect x="2" y="295" width="16" height="1" fill="#202020" />
<rect x="1" y="282" width="2" height="1" fill="#202020" />
<rect x="5" y="296" width="1" height="2" fill="#202020" />
<rect x="1" y="285" width="2" height="1" fill="#202020" />
<rect x="8" y="296" width="1" height="2" fill="#202020" />
<rect x="1" y="288" width="2" height="1" fill="#202020" />
<rect x="11" y="296" width="1" height="2" fill="#202020" />
<rect x="1" y="291" width="2" height="1" fill="#202020" />
<rect x="14" y="296" width="1" height="2" fill="#202020" />
<rect x="1" y="294" width="2" height="1" fill="#202020" />
<rect x="17" y="296" width="1" height="2" fill="#202020" />
<path d="M4.500 288c2-7 4.500-7 6.500 0s4.500 5 6 -2" fill="none" stroke="#1450C8" stroke-width="1.300"/>
<path d="M4.500 293c2-4 4-4 6 0s4.500 3 6.500-1" fill="none" stroke="#D83018" stroke-width="1.200"/>
<rect x="2" y="305" width="16" height="10" fill="#B8B8B8" stroke="#505050" stroke-width="1"/>
<circle cx="6.500" cy="309.500" r="1.300" fill="none" stroke="#303030" stroke-width="0.900"/><circle cx="13.500" cy="309.500" r="1.300" fill="none" stroke="#303030" stroke-width="0.900"/>
<rect x="6" y="311" width="8" height="1" fill="#303030" />
<circle cx="9.500" cy="332.500" r="7.500" fill="#9098A0" stroke="#505860" stroke-width="1"/>
<path d="M5 333.500c1.500-6 3.500-6 4.500-1s3 5 4.500-1" fill="none" stroke="#1438C8" stroke-width="1.600"/>
<path d="M2 362.0l9-8.500" stroke="#B8B030" stroke-width="2.600"/>
<path d="M2 362.0l9-8.500" stroke="#404010" stroke-width="0.600" transform="translate(1,1.200)"/>
<path d="M11 353.5c1.500-4 3.500-4 4 0l1 2" fill="none" stroke="#202020" stroke-width="1"/>
<text x="1" y="353" font-size="8.5" fill="#1438B4" font-weight="bold" >V</text>
<path d="M2 384.0l9-8.500" stroke="#B8B030" stroke-width="2.600"/>
<path d="M2 384.0l9-8.500" stroke="#404010" stroke-width="0.600" transform="translate(1,1.200)"/>
<path d="M11 375.5c1.500-4 3.500-4 4 0l1 2" fill="none" stroke="#202020" stroke-width="1"/>
<text x="1" y="375" font-size="8.5" fill="#1438B4" font-weight="bold" >I</text>
<rect x="2" y="392" width="15" height="9" fill="#FFFFFF" stroke="#303030" stroke-width="1"/>
<path d="M4 399c2-5 9-5 11 0" fill="none" stroke="#2878D8" stroke-width="1.200"/>
<path d="M9 400l4-6" stroke="#E04818" stroke-width="1.200"/>
<rect x="4" y="401" width="12" height="5" fill="#D8D8D8" stroke="#303030" stroke-width="1"/>
<rect x="10" y="403" width="3" height="1" fill="#B8A020" />
<path d="M1.500 432.500L17 417.500" stroke="#202020" stroke-width="1.200"/>
<rect x="2.5" y="440.5" width="13" height="13" fill="#5AA8A8" stroke="#2A6868" stroke-width="1"/>
<circle cx="9.200" cy="469" r="6.800" fill="#5AA8A8" stroke="#2A6868" stroke-width="1"/>
<path d="M2.500 484.500c7 0 12 5 12 12" fill="none" stroke="#202020" stroke-width="1.100"/>
<path d="M2.500 484.500v12h12" fill="none" stroke="#1E50D0" stroke-width="1" stroke-dasharray="1.500 1.500"/>
<ellipse cx="6" cy="513.500" rx="4.500" ry="6" fill="#4A9C9C" stroke="#2A6868" stroke-width="1"/><ellipse cx="12.500" cy="513.500" rx="4.500" ry="6" fill="#4A9C9C" stroke="#2A6868" stroke-width="1"/>
<text x="1" y="542" font-family="Liberation Serif" font-size="19" font-weight="bold" fill="#202020" style="font-family:'Liberation Serif',serif">A</text>
<rect x="2.5" y="550.5" width="13" height="12" fill="#5AA8A8" stroke="#202020" stroke-width="1.400"/>
<text x="4.5" y="561" font-size="11.5" fill="#000" font-weight="bold" textLength="9" lengthAdjust="spacingAndGlyphs" >S</text>
<rect x="1" y="578" width="16" height="1" fill="#202020" />
<rect x="9" y="571" width="1" height="16" fill="#202020" />
<rect x="6" y="575" width="6" height="6" fill="#5AA8A8" stroke="#2A6868" stroke-width="0.800"/>
<path d="M43.500 84.500a6 6 0 1 0 .5 4.500" fill="none" stroke="#1E4CA8" stroke-width="2.400"/>
<path d="M45.500 79v7h-7z" fill="#1E4CA8"/>
<path d="M31.500 106.500a6 6 0 1 1 -.5 4.500" fill="none" stroke="#1E4CA8" stroke-width="2.400"/>
<path d="M29.500 101v7h7z" fill="#1E4CA8"/>
<defs><linearGradient id="flp" x1="0" y1="0" x2="0" y2="1"><stop offset="0" stop-color="#14388C"/><stop offset="1" stop-color="#7FA6E8"/></linearGradient></defs>
<path d="M29.500 156.500l6-5v3.500h5v-3.500l6 5-6 5v-3.500h-5v3.500z" fill="url(#flp)"/>
<path d="M37.500 170.500l5 6h-3.500v5h3.500l-5 6-5-6h3.500v-5h-3.500z" fill="url(#flp)"/>
<g shape-rendering="crispEdges">
<rect x="66" y="78" width="101" height="1" fill="#0000C8" />
<rect x="66" y="162" width="101" height="1" fill="#0000C8" />
<rect x="66" y="78" width="1" height="85" fill="#0000C8" />
<rect x="166" y="78" width="1" height="85" fill="#0000C8" />
<rect x="66" y="72" width="101" height="2" fill="#00B400" />
<rect x="66" y="135" width="101" height="1" fill="#00B400" />
<rect x="66" y="72" width="1" height="64" fill="#00B400" />
<rect x="166" y="72" width="1" height="64" fill="#00B400" />
</g>
<rect x="126.7" y="80.8" width="20.1" height="9.4" fill="none" stroke="#000" stroke-width="1.2"/>
<rect x="84.6" y="96.6" width="22.1" height="26.4" fill="none" stroke="#000" stroke-width="1.2"/>
<rect x="86.1" y="94.9" width="3.6" height="7.1" fill="none" stroke="#000" stroke-width="1"/>
<rect x="98.6" y="93.1" width="5.1" height="7.1" fill="none" stroke="#000" stroke-width="1"/>
<rect x="93.2" y="104.1" width="4.5" height="17.2" fill="#000" stroke="#000" stroke-width="1"/>
<rect x="90.9" y="104.7" width="0.9" height="16.0" fill="#000" stroke="#000" stroke-width="1"/>
<polyline points="106.7,105.3 139.8,105.3" fill="none" stroke="#000" stroke-width="0.8"/>
<polyline points="106.7,106.5 139.8,106.5" fill="none" stroke="#000" stroke-width="0.8"/>
<polyline points="106.7,107.6 139.8,107.6" fill="none" stroke="#000" stroke-width="0.8"/>
<polyline points="106.7,108.9 139.8,108.9" fill="none" stroke="#000" stroke-width="0.8"/>
<polyline points="106.7,110.1 139.8,110.1" fill="none" stroke="#000" stroke-width="0.8"/>
<polyline points="106.7,112.4 139.8,112.4" fill="none" stroke="#000" stroke-width="0.8"/>
<polyline points="106.7,114.8 127.6,114.8 127.6,115.9 144.7,117.1" fill="none" stroke="#000" stroke-width="1"/>
<polyline points="108.7,118.3 109.7,121.8 119.6,121.8 119.6,118.3" fill="none" stroke="#000" stroke-width="1"/>
<polyline points="132.7,90.3 132.7,111.8" fill="none" stroke="#000" stroke-width="1.6"/>
<polyline points="134.6,90.3 134.6,111.8" fill="none" stroke="#000" stroke-width="1.6"/>
<polyline points="139.8,105.3 139.8,101.9 143.6,101.9 143.6,90.3" fill="none" stroke="#000" stroke-width="1.4"/>
<polyline points="140.6,90.3 140.6,108.8" fill="none" stroke="#000" stroke-width="1.6"/>
<polyline points="141.7,90.3 141.7,108.8" fill="none" stroke="#000" stroke-width="1.6"/>
<polyline points="142.7,90.3 142.7,108.8" fill="none" stroke="#000" stroke-width="1.6"/>
<polyline points="133.6,90.3 133.6,100.6 131.6,100.6 131.6,99.5 126.7,99.5 126.7,103.0" fill="none" stroke="#000" stroke-width="1"/>
<polyline points="74.6,103.1 74.6,121.8" fill="none" stroke="#000" stroke-width="1.2"/>
<polyline points="74.6,112.4 81.6,112.4 81.6,114.2 84.6,114.2" fill="none" stroke="#000" stroke-width="1"/>
<polyline points="147.7,104.1 147.7,100.7 153.7,100.7 153.7,97.3" fill="none" stroke="#000" stroke-width="1"/>
<polyline points="147.7,105.3 147.7,126.5" fill="none" stroke="#000" stroke-width="1"/>
<circle cx="147.7" cy="107.6" r="2.200" fill="#000"/>
<polyline points="144.7,117.1 147.7,117.1" fill="none" stroke="#000" stroke-width="1"/>
<polyline points="135.5,115.9 139.8,115.9" fill="none" stroke="#000" stroke-width="1.6"/>
</svg></body></html>
